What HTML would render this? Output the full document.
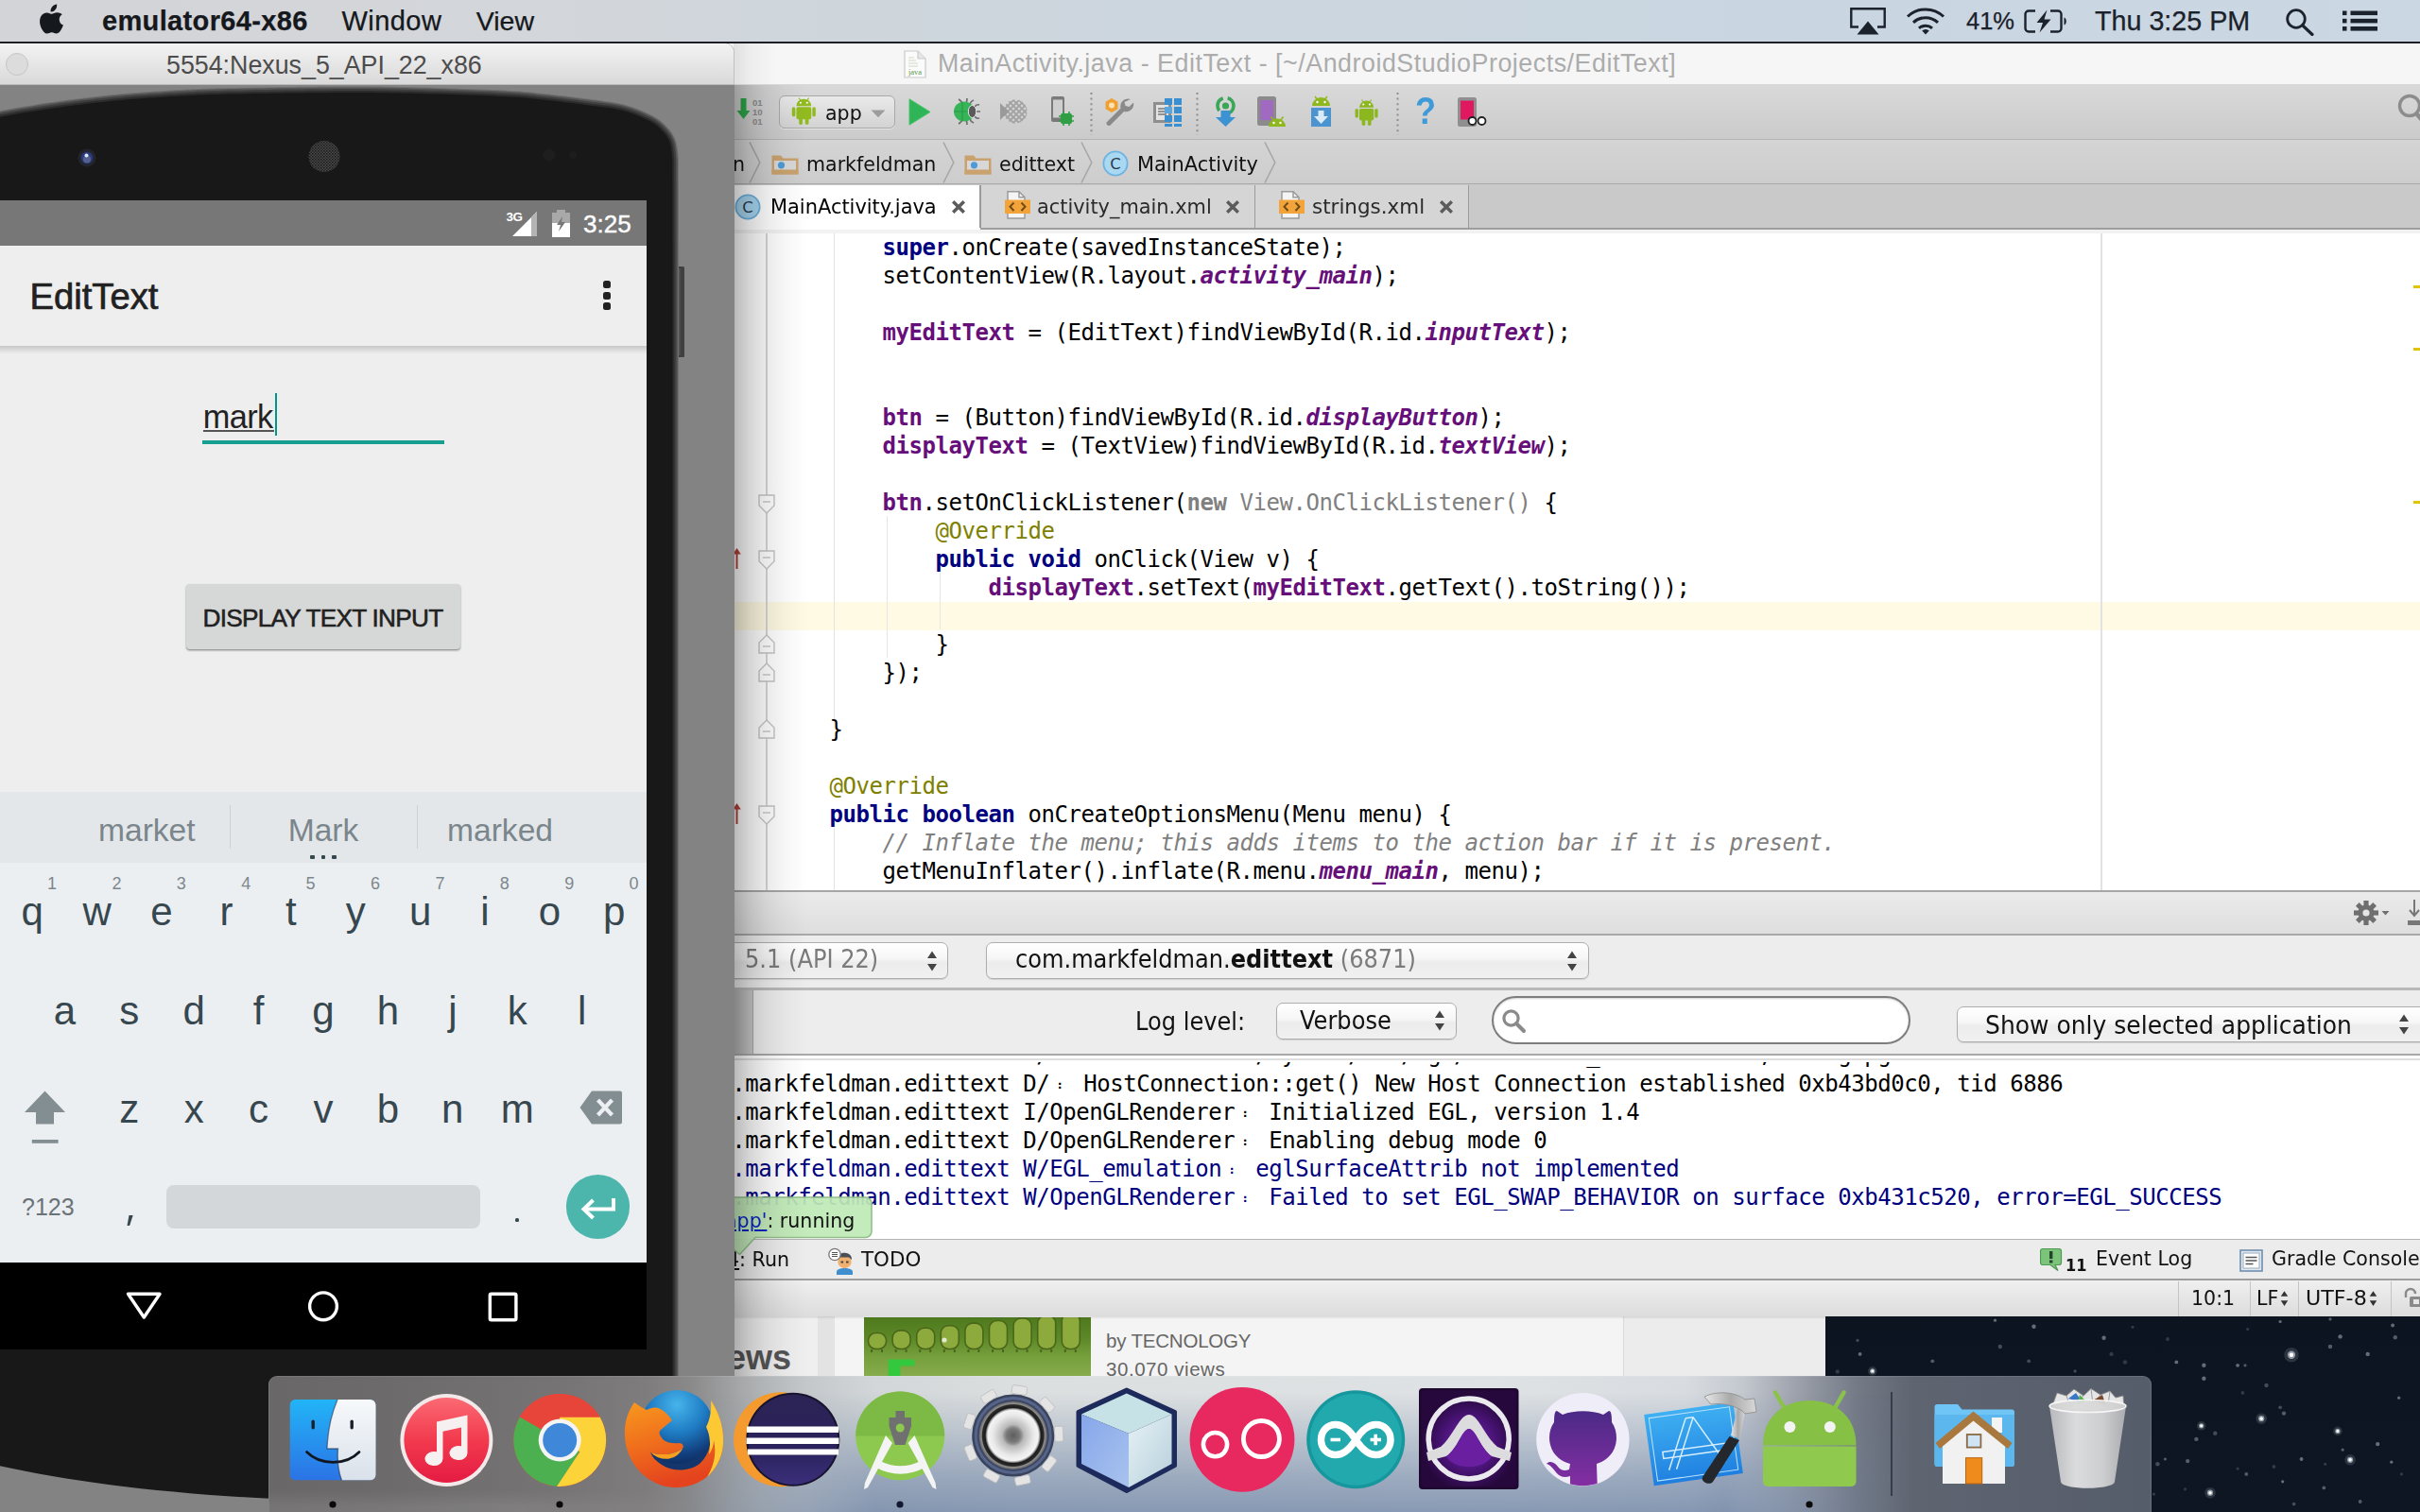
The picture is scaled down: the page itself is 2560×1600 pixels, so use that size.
<!DOCTYPE html>
<html lang="en">
<head>
<meta charset="utf-8">
<title>emulator64-x86</title>
<style>
*{box-sizing:border-box;margin:0;padding:0}
html,body{width:2560px;height:1600px;overflow:hidden;background:#0b141f;}
body{position:relative;font-family:"Liberation Sans",sans-serif;color:#000;-webkit-font-smoothing:antialiased}
.abs{position:absolute}
.t{white-space:nowrap;display:block}
.ui{font-family:"DejaVu Sans","Liberation Sans",sans-serif;font-size:20.6px;color:#111;white-space:nowrap}
.mono{font-family:"DejaVu Sans Mono","Liberation Mono",monospace;white-space:pre}
/* ---------- wallpaper ---------- */
#wall{left:0;top:0;width:2560px;height:1600px;background:linear-gradient(180deg,#0a121c 0%,#0b141f 85%,#0d1622 100%)}
/* ---------- menubar ---------- */
#menubar{left:0;top:0;width:2560px;height:44px;background:linear-gradient(90deg,#d3d4d7 0%,#d3d6da 22%,#cfd6dc 32%,#ccd6de 50%,#c9d6e1 75%,#cbd7e2 100%);z-index:50}
#menuline{left:0;top:44px;width:2560px;height:2px;background:#1c2026;z-index:50}
#menubar span{position:absolute;top:5px;-webkit-text-stroke:0.25px #15181c;font-size:28.5px;line-height:34px;color:#15181c;white-space:nowrap}
/* ---------- IDE ---------- */
#ide{left:776px;top:46px;width:1784px;height:1347px;background:#fff;overflow:hidden}
#idetitle{left:0;top:0;width:1784px;height:43px;background:#f6f6f6}
#idetool{left:0;top:43px;width:1784px;height:59px;background:linear-gradient(180deg,#d9d9d9,#cbcbcb);border-bottom:1px solid #b4b4b4}
#idecrumb{left:0;top:102px;width:1784px;height:47px;background:linear-gradient(180deg,#d4d4d4,#cdcdcd);border-bottom:1px solid #a9a9a9}
#idetabs{left:0;top:149px;width:1784px;height:48px;background:#c9c9c9;border-bottom:2px solid #9d9d9d}
/* ---------- emulator ---------- */
#emu{left:0;top:46px;width:776.6px;height:1554px;background:#838383;overflow:hidden;z-index:20;border-radius:0 9px 0 0}
#emutitle{left:0;top:0;width:776.6px;height:44px;background:linear-gradient(180deg,#f3f3f3,#d9d9d9);border-bottom:1px solid #b9b9b9;border-radius:0 9px 0 0;box-shadow:inset -1px 0 0 #c2c2c2,inset 0 1px 0 #fafafa}

.lg{font-family:"DejaVu Sans","Liberation Sans",sans-serif;transform-origin:0 0}
.code{font-size:24px;line-height:24px;letter-spacing:-0.449px;color:#000}
.k{color:#000080;font-weight:bold}
.f{color:#660e7a;font-weight:bold}
.s{color:#660e7a;font-weight:bold;font-style:italic}
.an{color:#808000}
.c{color:#808080;font-style:italic}
.g{color:#808080}
.gb{color:#808080;font-weight:bold}
</style>
</head>
<body>
<div id="wall" class="abs"></div>

<div class="abs" style="left:700px;top:46px;width:80px;height:44px;background:#f6f6f6"></div>
<!-- ================= IDE WINDOW ================= -->
<div id="ide" class="abs">
  <div id="idetitle" class="abs"></div>
  <div id="idetool" class="abs"></div>
  <div id="idecrumb" class="abs"></div>
  <div id="idetabs" class="abs"></div>
<div class="abs" style="left:-776px;top:-46px;width:2560px;height:1600px">
<span class="abs t" style="left:992.0px;top:54.2px;font-size:26.8px;line-height:26.8px;color:#acacac;letter-spacing:0.535px;">MainActivity.java - EditText - [~/AndroidStudioProjects/EditText]</span>
<svg class="abs" style="left:956.3px;top:53px" width="24" height="30" viewBox="0 0 24 30"><path d="M1 1 H15 L23 9 V29 H1 Z" fill="#fbfbfb" stroke="#c9c9c9" stroke-width="1.2"/><path d="M15 1 V9 H23" fill="#e6e6e6" stroke="#c9c9c9" stroke-width="1.2"/><path d="M5 8h6M5 11h8M5 14h10M5 17h10" stroke="#cfd8c6" stroke-width="1.2"/><text x="12" y="26" font-size="8.5" font-family="Liberation Serif,serif" fill="#5a9a48" text-anchor="middle">java</text></svg>
<svg class="abs" style="left:779px;top:103px" width="32" height="30" viewBox="0 0 32 30"><path d="M4.500 1 H10.500 V14 H14.500 L7.500 23 L0.500 14 H4.500 Z" fill="#2faa4a"/><g font-family="Liberation Sans,sans-serif" font-size="9.500" font-weight="bold" fill="#8c8c8c"><text x="17" y="9">01</text><text x="17" y="19">10</text><text x="17" y="29">01</text></g></svg>
<div class="abs" style="left:824.300px;top:100.600px;width:122.300px;height:35.800px;border:1.500px solid #a9a9a9;border-radius:6px;background:linear-gradient(180deg,#e9e9e9,#d3d3d3);box-shadow:0 1px 0 rgba(255,255,255,.5)"></div>
<svg class="abs" style="left:836.6px;top:103px" width="26.7" height="29.6" viewBox="0 0 27 30"><g fill="#92bb1f"><path d="M5.500 9.300 a8 7.600 0 0 1 16 0 z"/><rect x="5.500" y="10.400" width="16" height="13.200" rx="1.800"/><rect x="0.800" y="10.400" width="3.600" height="10.400" rx="1.800"/><rect x="22.600" y="10.400" width="3.600" height="10.400" rx="1.800"/><rect x="8.300" y="21" width="3.800" height="8.400" rx="1.800"/><rect x="14.900" y="21" width="3.800" height="8.400" rx="1.800"/><path d="M8.200 0.600 L10.200 3.600 M18.800 0.600 L16.800 3.600" stroke="#92bb1f" stroke-width="1.100"/></g><circle cx="10" cy="5.800" r="1.100" fill="#fff"/><circle cx="17" cy="5.800" r="1.100" fill="#fff"/></svg>
<span class="abs t lg" style="left:872.600px;top:109.100px;font-size:22px;line-height:22px;color:#111;transform:scaleX(0.935)">app</span>
<svg class="abs" style="left:920.500px;top:116px" width="16" height="9" viewBox="0 0 16 9"><path d="M0.500 0.500 H15.500 L8 8.200 Z" fill="#9c9c9c"/></svg>
<svg class="abs" style="left:961px;top:104px" width="24" height="29" viewBox="0 0 24 29"><path d="M1 0.800 L23 14.500 L1 28.200 Z" fill="#2fb457" stroke="#46c46a" stroke-width="1"/></svg>
<svg class="abs" style="left:1006px;top:102px" width="32" height="32" viewBox="0 0 32 32"><g fill="none" stroke="#6d6d6d" stroke-width="1.700"><path d="M8 3 q2 1 4 4 M17 2 q0 3 -1 5 M24 4 q-3 1 -4 4 M8 29 q2 -1 4 -4 M17 30 q0 -3 -1 -5 M24 28 q-3 -1 -4 -4 M25 11 q2 -3 5 -2 M26 16 h5 M25 21 q2 3 5 2"/></g><ellipse cx="14" cy="16" rx="11" ry="10.500" fill="#35b558"/><path d="M3 16 H21 M12 6 V26" stroke="#2a9a48" stroke-width="1.200"/><ellipse cx="22.500" cy="16" rx="4.200" ry="6.500" fill="#5a5a5a" stroke="#e8e8e8" stroke-width="1"/></svg>
<svg class="abs" style="left:1057px;top:103px" width="30" height="30" viewBox="0 0 30 30"><defs><clipPath id="hc"><circle cx="17" cy="15" r="12.500"/></clipPath></defs><g clip-path="url(#hc)" stroke="#a2a2a2" stroke-width="1.800"><path d="M-24 0 L6 30 M6 0 L-24 30"/><path d="M-18 0 L12 30 M12 0 L-18 30"/><path d="M-12 0 L18 30 M18 0 L-12 30"/><path d="M-6 0 L24 30 M24 0 L-6 30"/><path d="M0 0 L30 30 M30 0 L0 30"/><path d="M6 0 L36 30 M36 0 L6 30"/><path d="M12 0 L42 30 M42 0 L12 30"/><path d="M18 0 L48 30 M48 0 L18 30"/><path d="M24 0 L54 30 M54 0 L24 30"/></g><path d="M1 6 L10 15 L1 24 Z" fill="#9a9a9a"/></svg>
<svg class="abs" style="left:1110px;top:101px" width="28" height="34" viewBox="0 0 28 34"><rect x="2" y="1" width="14" height="27" rx="2" fill="#7a7a7a"/><rect x="4" y="4.500" width="10" height="19" fill="#cfcfcf"/><rect x="12" y="19" width="12" height="11" rx="2" fill="#2f9e44"/><path d="M10 22 h2 M24 22 h2 M10 27 h2 M24 27 h2 M15 17 v2 M21 17 v2 M15 30 v2 M21 30 v2" stroke="#2f9e44" stroke-width="1.600"/></svg>
<svg class="abs" style="left:1152.8px;top:97px" width="3" height="46" viewBox="0 0 3 46"><path d="M1.500 1 V46" stroke="#8d8d8d" stroke-width="2" stroke-dasharray="2 3.600"/></svg>
<svg class="abs" style="left:1167px;top:102px" width="34" height="32" viewBox="0 0 34 32"><path d="M29 3 a8 8 0 0 0 -10.500 9.500 L4 27 a2.500 2.500 0 0 0 3.500 3.500 L22 16 a8 8 0 0 0 10 -9.500 l-4.500 4.500 l-4 -1 l-1 -4 z" fill="#8a8a8a"/><path d="M9 2 l6.500 3.700 v7.500 L9 17 l-6.500 -3.800 v-7.500 z" fill="#f0a030"/><circle cx="9" cy="9.500" r="3" fill="#fbe3b5"/></svg>
<svg class="abs" style="left:1219px;top:103px" width="32" height="31" viewBox="0 0 32 31"><rect x="1" y="5" width="19" height="22" fill="#8e8e8e"/><rect x="4" y="8" width="13" height="16" fill="#e4e4e4"/><path d="M6 12h9M6 15h9M6 18h9" stroke="#777" stroke-width="1.300"/><g fill="#3a8fd0"><rect x="13" y="1" width="8" height="7"/><rect x="23" y="1" width="8" height="7"/><rect x="13" y="10" width="8" height="7" fill="#5aa7e0"/><rect x="23" y="10" width="8" height="7"/><rect x="13" y="19" width="8" height="7"/><rect x="23" y="19" width="8" height="7"/><rect x="13" y="28" width="8" height="3"/><rect x="23" y="28" width="8" height="3"/></g></svg>
<svg class="abs" style="left:1265px;top:97px" width="3" height="46" viewBox="0 0 3 46"><path d="M1.500 1 V46" stroke="#8d8d8d" stroke-width="2" stroke-dasharray="2 3.600"/></svg>
<svg class="abs" style="left:1283px;top:101px" width="27" height="34" viewBox="0 0 27 34"><circle cx="13.500" cy="11" r="8.500" fill="none" stroke="#3aa657" stroke-width="3.600" stroke-dasharray="16 5"/><circle cx="13.500" cy="11" r="3.600" fill="#3aa657"/><path d="M8.500 16 H18.500 V23 H24 L13.500 33 L3 23 H8.500 Z" fill="#3d92d2"/></svg>
<svg class="abs" style="left:1329px;top:101px" width="35" height="34" viewBox="0 0 35 34"><rect x="1" y="1" width="20" height="31" rx="2.500" fill="#8b8b8b"/><rect x="4" y="5" width="14" height="21" fill="#a06ac0"/><path d="M13 33 a9 8.500 0 0 1 18 0 z" fill="#8fb81f"/><path d="M15.500 22.500 l2.500 3.500 M28.500 22.500 l-2.500 3.500" stroke="#8fb81f" stroke-width="1.500"/><circle cx="18.500" cy="29" r="1.200" fill="#fff"/><circle cx="25.500" cy="29" r="1.200" fill="#fff"/></svg>
<svg class="abs" style="left:1385px;top:101px" width="25" height="34" viewBox="0 0 25 34"><path d="M3 11 a9.500 9 0 0 1 19 0 z" fill="#8fb81f"/><path d="M6 1 l3 4 M19 1 l-3 4" stroke="#8fb81f" stroke-width="1.500"/><circle cx="8.500" cy="7" r="1.200" fill="#fff"/><circle cx="16.500" cy="7" r="1.200" fill="#fff"/><rect x="2" y="13" width="21" height="20" fill="#4b94cf"/><path d="M9.500 16 H15.500 V22 H20 L12.500 30 L5 22 H9.500 Z" fill="#dbeaf7"/></svg>
<svg class="abs" style="left:1432.3px;top:104.5px" width="27.2" height="28.5" viewBox="0 0 27 30"><g fill="#8cb71f"><path d="M5.500 9.300 a8 7.600 0 0 1 16 0 z"/><rect x="5.500" y="10.400" width="16" height="13.200" rx="1.800"/><rect x="0.800" y="10.400" width="3.600" height="10.400" rx="1.800"/><rect x="22.600" y="10.400" width="3.600" height="10.400" rx="1.800"/><rect x="8.300" y="21" width="3.800" height="8.400" rx="1.800"/><rect x="14.900" y="21" width="3.800" height="8.400" rx="1.800"/><path d="M8.200 0.600 L10.200 3.600 M18.800 0.600 L16.800 3.600" stroke="#8cb71f" stroke-width="1.100"/></g><circle cx="10" cy="5.800" r="1.100" fill="#fff"/><circle cx="17" cy="5.800" r="1.100" fill="#fff"/></svg>
<svg class="abs" style="left:1477px;top:97px" width="3" height="46" viewBox="0 0 3 46"><path d="M1.500 1 V46" stroke="#8d8d8d" stroke-width="2" stroke-dasharray="2 3.600"/></svg>
<span class="abs t" style="left:1497px;top:97px;font-size:40px;line-height:40px;color:#3f9ad8;font-family:'Liberation Sans',sans-serif;font-weight:bold;transform:scaleX(0.900);transform-origin:0 0">?</span>
<svg class="abs" style="left:1541px;top:102px" width="33" height="33" viewBox="0 0 33 33"><rect x="1" y="1" width="20" height="31" rx="2.500" fill="#8f8f8f"/><rect x="4" y="4.500" width="14" height="20" fill="#e0185f"/><circle cx="16.500" cy="26" r="4" fill="#fff" stroke="#222" stroke-width="1.800"/><circle cx="26.500" cy="26" r="4" fill="#fff" stroke="#222" stroke-width="1.800"/></svg>
<svg class="abs" style="left:2536px;top:99px" width="30" height="32" viewBox="0 0 30 32"><circle cx="13" cy="13" r="10.500" fill="none" stroke="#8c8c8c" stroke-width="3.400"/><path d="M20 21 L28 30" stroke="#8c8c8c" stroke-width="4.500"/></svg>
<span class="abs t lg" style="left:775.0px;top:163.0px;font-size:22px;line-height:22px;color:#111;transform:scaleX(0.935);">n</span>
<svg class="abs" style="left:791px;top:150px" width="16" height="44" viewBox="0 0 16 44"><path d="M2 0.5 L12.8 22 L2 43.5" fill="none" stroke="#a7a7a7" stroke-width="1.6"/></svg>
<svg class="abs" style="left:996px;top:150px" width="16" height="44" viewBox="0 0 16 44"><path d="M2 0.5 L12.8 22 L2 43.5" fill="none" stroke="#a7a7a7" stroke-width="1.6"/></svg>
<svg class="abs" style="left:1141.7px;top:150px" width="16" height="44" viewBox="0 0 16 44"><path d="M2 0.5 L12.8 22 L2 43.5" fill="none" stroke="#a7a7a7" stroke-width="1.6"/></svg>
<svg class="abs" style="left:1336px;top:150px" width="16" height="44" viewBox="0 0 16 44"><path d="M2 0.5 L12.8 22 L2 43.5" fill="none" stroke="#a7a7a7" stroke-width="1.6"/></svg>
<svg class="abs" style="left:815.7px;top:162px" width="29" height="23" viewBox="0 0 29 23"><path d="M0.5 2.5 H10 L12.5 5.5 H28.5 V22.5 H0.5 Z" fill="#c9a26f"/><rect x="3" y="8" width="23" height="12" fill="#d8d8d8"/><rect x="0.5" y="17.5" width="28" height="5" fill="#c9a26f"/><circle cx="10.5" cy="12.8" r="3.6" fill="#4e9bd9"/></svg>
<svg class="abs" style="left:1020px;top:162px" width="29" height="23" viewBox="0 0 29 23"><path d="M0.5 2.5 H10 L12.5 5.5 H28.5 V22.5 H0.5 Z" fill="#c9a26f"/><rect x="3" y="8" width="23" height="12" fill="#d8d8d8"/><rect x="0.5" y="17.5" width="28" height="5" fill="#c9a26f"/><circle cx="10.5" cy="12.8" r="3.6" fill="#4e9bd9"/></svg>
<span class="abs t lg" style="left:852.5px;top:163.0px;font-size:22px;line-height:22px;color:#111;transform:scaleX(0.935);">markfeldman</span>
<span class="abs t lg" style="left:1057.0px;top:163.0px;font-size:22px;line-height:22px;color:#111;transform:scaleX(0.935);">edittext</span>
<svg class="abs" style="left:1166px;top:159.3px" width="28" height="28" viewBox="0 0 28 28"><circle cx="14" cy="14" r="12.6" fill="#a9d8f3" stroke="#6db3e0" stroke-width="1.8"/><text x="14" y="20.3" font-size="16.5" font-family="DejaVu Sans,sans-serif" fill="#2b3d4d" text-anchor="middle">C</text></svg>
<span class="abs t lg" style="left:1203.0px;top:163.0px;font-size:22px;line-height:22px;color:#111;transform:scaleX(0.948);">MainActivity</span>
<div class="abs" style="left:776.0px;top:195.5px;width:260.6px;height:47.5px;background:#ffffff;"></div>
<div class="abs" style="left:1036.6px;top:196.0px;width:290.4px;height:45.0px;background:#d5d5d5;"></div>
<div class="abs" style="left:1327.0px;top:196.0px;width:226.0px;height:45.0px;background:#d5d5d5;"></div>
<div class="abs" style="left:1036.0px;top:196.0px;width:1.6px;height:45.0px;background:#9b9b9b;"></div>
<div class="abs" style="left:1326.5px;top:196.0px;width:1.6px;height:45.0px;background:#9b9b9b;"></div>
<div class="abs" style="left:1552.5px;top:196.0px;width:1.6px;height:45.0px;background:#9b9b9b;"></div>
<svg class="abs" style="left:776.5px;top:204.8px" width="28" height="28" viewBox="0 0 28 28"><circle cx="14" cy="14" r="12.6" fill="#a9d8f3" stroke="#6db3e0" stroke-width="1.8"/><text x="14" y="20.3" font-size="16.5" font-family="DejaVu Sans,sans-serif" fill="#2b3d4d" text-anchor="middle">C</text></svg>
<span class="abs t lg" style="left:815.0px;top:208.0px;font-size:22px;line-height:22px;color:#000;transform:scaleX(0.951);">MainActivity.java</span>
<span class="abs t lg" style="left:1096.5px;top:208.0px;font-size:22px;line-height:22px;color:#2a2a2a;transform:scaleX(0.949);">activity_main.xml</span>
<span class="abs t lg" style="left:1387.5px;top:208.0px;font-size:22px;line-height:22px;color:#2a2a2a;transform:scaleX(0.975);">strings.xml</span>
<svg class="abs" style="left:1005.7px;top:210.8px" width="16" height="16" viewBox="0 0 16 16"><path d="M2.2 2.2 L13.8 13.8 M13.8 2.2 L2.2 13.8" stroke="#5c5c5c" stroke-width="3.4"/></svg>
<svg class="abs" style="left:1295.7px;top:210.8px" width="16" height="16" viewBox="0 0 16 16"><path d="M2.2 2.2 L13.8 13.8 M13.8 2.2 L2.2 13.8" stroke="#5c5c5c" stroke-width="3.4"/></svg>
<svg class="abs" style="left:1521.6px;top:210.8px" width="16" height="16" viewBox="0 0 16 16"><path d="M2.2 2.2 L13.8 13.8 M13.8 2.2 L2.2 13.8" stroke="#5c5c5c" stroke-width="3.4"/></svg>
<svg class="abs" style="left:1062.5px;top:202px" width="27" height="30" viewBox="0 0 27 30"><path d="M3 0.8 H15 L21 6.8 V29 H3 Z" fill="#f4f4f4" stroke="#9a9a9a" stroke-width="1.5"/><path d="M15 0.8 V6.8 H21" fill="none" stroke="#9a9a9a" stroke-width="1.5"/><rect x="0" y="9.5" width="27" height="14.5" fill="#f2a33a"/><path d="M9.5 12.5 L5.5 16.7 L9.5 21 M17.5 12.5 L21.5 16.7 L17.5 21" fill="none" stroke="#6b4a17" stroke-width="1.9"/></svg>
<svg class="abs" style="left:1352.7px;top:202px" width="27" height="30" viewBox="0 0 27 30"><path d="M3 0.8 H15 L21 6.8 V29 H3 Z" fill="#f4f4f4" stroke="#9a9a9a" stroke-width="1.5"/><path d="M15 0.8 V6.8 H21" fill="none" stroke="#9a9a9a" stroke-width="1.5"/><rect x="0" y="9.5" width="27" height="14.5" fill="#f2a33a"/><path d="M9.5 12.5 L5.5 16.7 L9.5 21 M17.5 12.5 L21.5 16.7 L17.5 21" fill="none" stroke="#6b4a17" stroke-width="1.9"/></svg>
<div class="abs" style="left:776.0px;top:243.0px;width:1784.0px;height:4.0px;background:#f2f2f2;"></div>
<div class="abs" style="left:776.0px;top:247.0px;width:1784.0px;height:695.0px;background:#ffffff;"></div>
<div class="abs" style="left:776.0px;top:636.5px;width:1784.0px;height:30.0px;background:#fffae3;"></div>
<div class="abs" style="left:810.0px;top:247.0px;width:1.5px;height:695.0px;background:#d4d4d4;"></div>
<div class="abs" style="left:2222.0px;top:247.0px;width:1.6px;height:695.0px;background:#e2e2e2;"></div>
<div class="abs" style="left:882.0px;top:247.0px;width:1.3px;height:518.0px;background:#e3e3e3;"></div>
<div class="abs" style="left:882.0px;top:876.0px;width:1.3px;height:66.0px;background:#e3e3e3;"></div>
<div class="abs" style="left:938.0px;top:546.0px;width:1.3px;height:150.0px;background:#e6e6e6;"></div>
<div class="abs" style="left:994.0px;top:606.0px;width:1.3px;height:60.0px;background:#e6e6e6;"></div>
<div class="abs" style="left:2553.0px;top:301.5px;width:7.0px;height:3.5px;background:#e2c400;"></div>
<div class="abs" style="left:2553.0px;top:367.5px;width:7.0px;height:3.5px;background:#e2c400;"></div>
<div class="abs" style="left:2553.0px;top:529.5px;width:7.0px;height:3.5px;background:#e2c400;"></div>
<svg class="abs" style="left:801.5px;top:522.5px" width="18" height="21" viewBox="0 0 18 21"><path d="M1 1 H17 V12 L9 20 L1 12 Z" fill="#fff" stroke="#c4c4c4" stroke-width="1.4"/><path d="M5 8 H13" stroke="#c4c4c4" stroke-width="1.4"/></svg>
<svg class="abs" style="left:801.5px;top:581.5px" width="18" height="21" viewBox="0 0 18 21"><path d="M1 1 H17 V12 L9 20 L1 12 Z" fill="#fff" stroke="#c4c4c4" stroke-width="1.4"/><path d="M5 8 H13" stroke="#c4c4c4" stroke-width="1.4"/></svg>
<svg class="abs" style="left:801.5px;top:670.5px" width="18" height="21" viewBox="0 0 18 21"><path d="M1 20 H17 V9 L9 1 L1 9 Z" fill="#fff" stroke="#c4c4c4" stroke-width="1.4"/><path d="M5 13 H13" stroke="#c4c4c4" stroke-width="1.4"/></svg>
<svg class="abs" style="left:801.5px;top:700.5px" width="18" height="21" viewBox="0 0 18 21"><path d="M1 20 H17 V9 L9 1 L1 9 Z" fill="#fff" stroke="#c4c4c4" stroke-width="1.4"/><path d="M5 13 H13" stroke="#c4c4c4" stroke-width="1.4"/></svg>
<svg class="abs" style="left:801.5px;top:760.5px" width="18" height="21" viewBox="0 0 18 21"><path d="M1 20 H17 V9 L9 1 L1 9 Z" fill="#fff" stroke="#c4c4c4" stroke-width="1.4"/><path d="M5 13 H13" stroke="#c4c4c4" stroke-width="1.4"/></svg>
<svg class="abs" style="left:801.5px;top:851.5px" width="18" height="21" viewBox="0 0 18 21"><path d="M1 1 H17 V12 L9 20 L1 12 Z" fill="#fff" stroke="#c4c4c4" stroke-width="1.4"/><path d="M5 8 H13" stroke="#c4c4c4" stroke-width="1.4"/></svg>
<svg class="abs" style="left:774px;top:579px" width="12" height="24" viewBox="0 0 12 24"><path d="M5.5 23 V5" stroke="#b8403a" stroke-width="2"/><path d="M1.2 7.5 L5.5 1 L9.8 7.5 Z" fill="#b8403a"/></svg>
<svg class="abs" style="left:774px;top:849px" width="12" height="24" viewBox="0 0 12 24"><path d="M5.5 23 V5" stroke="#b8403a" stroke-width="2"/><path d="M1.2 7.5 L5.5 1 L9.8 7.5 Z" fill="#b8403a"/></svg>
<span class="abs t mono code" style="left:933.5px;top:250.0px"><span class="k">super</span>.onCreate(savedInstanceState);</span>
<span class="abs t mono code" style="left:933.5px;top:280.0px">setContentView(R.layout.<span class="s">activity_main</span>);</span>
<span class="abs t mono code" style="left:933.5px;top:340.0px"><span class="f">myEditText</span> = (EditText)findViewById(R.id.<span class="s">inputText</span>);</span>
<span class="abs t mono code" style="left:933.5px;top:430.0px"><span class="f">btn</span> = (Button)findViewById(R.id.<span class="s">displayButton</span>);</span>
<span class="abs t mono code" style="left:933.5px;top:460.0px"><span class="f">displayText</span> = (TextView)findViewById(R.id.<span class="s">textView</span>);</span>
<span class="abs t mono code" style="left:933.5px;top:520.0px"><span class="f">btn</span>.setOnClickListener(<span class="gb">new</span><span class="g"> View.OnClickListener()</span> {</span>
<span class="abs t mono code" style="left:989.5px;top:550.0px"><span class="an">@Override</span></span>
<span class="abs t mono code" style="left:989.5px;top:580.0px"><span class="k">public void</span> onClick(View v) {</span>
<span class="abs t mono code" style="left:1045.5px;top:610.0px"><span class="f">displayText</span>.setText(<span class="f">myEditText</span>.getText().toString());</span>
<span class="abs t mono code" style="left:989.5px;top:670.0px">}</span>
<span class="abs t mono code" style="left:933.5px;top:700.0px">});</span>
<span class="abs t mono code" style="left:877.5px;top:760.0px">}</span>
<span class="abs t mono code" style="left:877.5px;top:820.0px"><span class="an">@Override</span></span>
<span class="abs t mono code" style="left:877.5px;top:850.0px"><span class="k">public boolean</span> onCreateOptionsMenu(Menu menu) {</span>
<span class="abs t mono code" style="left:933.5px;top:880.0px"><span class="c">// Inflate the menu; this adds items to the action bar if it is present.</span></span>
<span class="abs t mono code" style="left:933.5px;top:910.0px">getMenuInflater().inflate(R.menu.<span class="s">menu_main</span>, menu);</span>
<div class="abs" style="left:776.0px;top:942.0px;width:1784.0px;height:1.5px;background:#a6a6a6;"></div>
<div class="abs" style="left:776.0px;top:943.5px;width:1784.0px;height:44.5px;background:linear-gradient(180deg,#ebebeb,#dedede);"></div>
<div class="abs" style="left:776.0px;top:987.5px;width:1784.0px;height:2.0px;background:#a9a9a9;"></div>
<div class="abs" style="left:776.0px;top:989.5px;width:1784.0px;height:56.0px;background:#ededed;"></div>
<div class="abs" style="left:776.0px;top:1045.0px;width:1784.0px;height:2.5px;background:#b9b9b9;"></div>
<div class="abs" style="left:776.0px;top:1047.5px;width:1784.0px;height:67.0px;background:#ededed;"></div>
<div class="abs" style="left:776.0px;top:1047.5px;width:21.0px;height:67.0px;background:linear-gradient(90deg,#b5b5b5,#c9c9c9);border-right:1.5px solid #a8a8a8;"></div>
<div class="abs" style="left:776.0px;top:1114.5px;width:1784.0px;height:2.0px;background:#a9a9a9;"></div>
<div class="abs" style="left:776.0px;top:1116.5px;width:1784.0px;height:194.5px;background:#ffffff;"></div>
<div class="abs" style="left:776.0px;top:1120.0px;width:1784.0px;height:1.5px;background:#dedede;"></div>
<svg class="abs" style="left:2489px;top:952px" width="42" height="28" viewBox="0 0 42 28"><g transform="translate(14,14)" fill="#6f6f6f"><rect x="-2.6" y="-13" width="5.2" height="8" transform="rotate(0)"/><rect x="-2.6" y="-13" width="5.2" height="8" transform="rotate(45)"/><rect x="-2.6" y="-13" width="5.2" height="8" transform="rotate(90)"/><rect x="-2.6" y="-13" width="5.2" height="8" transform="rotate(135)"/><rect x="-2.6" y="-13" width="5.2" height="8" transform="rotate(180)"/><rect x="-2.6" y="-13" width="5.2" height="8" transform="rotate(225)"/><rect x="-2.6" y="-13" width="5.2" height="8" transform="rotate(270)"/><rect x="-2.6" y="-13" width="5.2" height="8" transform="rotate(315)"/><circle r="8.6"/><circle r="3.6" fill="#e4e4e4"/></g><path d="M30.5 12 H38.5 L34.5 16.5 Z" fill="#6f6f6f"/></svg><svg class="abs" style="left:2546px;top:950px" width="16" height="32" viewBox="0 0 16 32"><path d="M8 2 V18 M3 13 L8 19 L13 13" fill="none" stroke="#777" stroke-width="2"/><rect x="1" y="24" width="15" height="5" fill="#777"/></svg>
<div class="abs" style="left:700.0px;top:996.7px;width:302.7px;height:39.5px;border:1.5px solid #aeaeae;border-radius:7px;background:linear-gradient(180deg,#ffffff 0%,#f6f6f6 45%,#ececec 55%,#f1f1f1 100%);box-shadow:0 1px 1px rgba(0,0,0,.12);"></div>
<span class="abs t lg" style="left:788.0px;top:1002.2px;font-size:26px;line-height:26px;color:#7b7b7b;transform:scaleX(0.927);">5.1 (API 22)</span>
<svg class="abs" style="left:980.0px;top:1004.5px" width="12" height="24" viewBox="0 0 12 24"><path d="M6 1.5 L11 9 H1 Z M6 22.5 L11 15 H1 Z" fill="#444"/></svg>
<div class="abs" style="left:1043.0px;top:996.7px;width:637.5px;height:39.5px;border:1.5px solid #aeaeae;border-radius:7px;background:linear-gradient(180deg,#ffffff 0%,#f6f6f6 45%,#ececec 55%,#f1f1f1 100%);box-shadow:0 1px 1px rgba(0,0,0,.12);"></div>
<span class="abs t lg" style="left:1074.4px;top:1002.2px;font-size:26px;line-height:26px;color:#111;transform:scaleX(0.927);">com.markfeldman.<b>edittext</b> <span style="color:#7b7b7b">(6871)</span></span>
<svg class="abs" style="left:1656.5px;top:1004.5px" width="12" height="24" viewBox="0 0 12 24"><path d="M6 1.5 L11 9 H1 Z M6 22.5 L11 15 H1 Z" fill="#444"/></svg>
<span class="abs t lg" style="left:1200.5px;top:1067.5px;font-size:26px;line-height:26px;color:#111;transform:scaleX(0.927);">Log level:</span>
<div class="abs" style="left:1349.5px;top:1061.0px;width:191.3px;height:38.5px;border:1.5px solid #aeaeae;border-radius:7px;background:linear-gradient(180deg,#ffffff 0%,#f6f6f6 45%,#ececec 55%,#f1f1f1 100%);box-shadow:0 1px 1px rgba(0,0,0,.12);"></div>
<span class="abs t lg" style="left:1375.0px;top:1067.3px;font-size:26px;line-height:26px;color:#111;transform:scaleX(0.927);">Verbose</span>
<svg class="abs" style="left:1516.5px;top:1068.0px" width="12" height="24" viewBox="0 0 12 24"><path d="M6 1.5 L11 9 H1 Z M6 22.5 L11 15 H1 Z" fill="#444"/></svg>
<div class="abs" style="left:1578px;top:1054px;width:443px;height:50.5px;border:2px solid #7d7d7d;border-radius:26px;background:#fff;box-shadow:inset 0 1px 2px rgba(0,0,0,.18)"></div>
<svg class="abs" style="left:1587px;top:1066px" width="28" height="28" viewBox="0 0 28 28"><circle cx="11.5" cy="11.5" r="7.6" fill="none" stroke="#8a8a8a" stroke-width="3.2"/><path d="M17 17 L25 25" stroke="#8a8a8a" stroke-width="4" stroke-linecap="round"/></svg>
<div class="abs" style="left:2069.5px;top:1064.5px;width:520.0px;height:38.5px;border:1.5px solid #aeaeae;border-radius:7px;background:linear-gradient(180deg,#ffffff 0%,#f6f6f6 45%,#ececec 55%,#f1f1f1 100%);box-shadow:0 1px 1px rgba(0,0,0,.12);"></div>
<span class="abs t lg" style="left:2100.0px;top:1072.3px;font-size:26px;line-height:26px;color:#111;transform:scaleX(0.962);">Show only selected application</span>
<svg class="abs" style="left:2537.0px;top:1071.5px" width="12" height="24" viewBox="0 0 12 24"><path d="M6 1.5 L11 9 H1 Z M6 22.5 L11 15 H1 Z" fill="#444"/></svg>
<div class="abs" style="left:776px;top:1124px;width:1784px;height:8px;overflow:hidden"><span class="abs t mono code" style="left:-1.8px;top:-20.5px;color:#000;">.markfeldman.edittext D/libEGL</span><span class="abs t mono code" style="left:454.2px;top:-20.5px;color:#000;">loaded /system/lib/egl/libGLESv2_emulation.so, using pg</span></div>
<span class="abs t mono code" style="left:774.2px;top:1135.1px;color:#000;">.markfeldman.edittext D/</span>
<span class="abs t mono" style="left:1117.2px;top:1141.4px;font-size:13px;line-height:13px;font-weight:bold;color:#000">:</span>
<span class="abs t mono code" style="left:1146.2px;top:1135.1px;color:#000;">HostConnection::get() New Host Connection established 0xb43bd0c0, tid 6886</span>
<span class="abs t mono code" style="left:774.2px;top:1165.1px;color:#000;">.markfeldman.edittext I/OpenGLRenderer</span>
<span class="abs t mono" style="left:1313.2px;top:1171.4px;font-size:13px;line-height:13px;font-weight:bold;color:#000">:</span>
<span class="abs t mono code" style="left:1342.2px;top:1165.1px;color:#000;">Initialized EGL, version 1.4</span>
<span class="abs t mono code" style="left:774.2px;top:1195.1px;color:#000;">.markfeldman.edittext D/OpenGLRenderer</span>
<span class="abs t mono" style="left:1313.2px;top:1201.4px;font-size:13px;line-height:13px;font-weight:bold;color:#000">:</span>
<span class="abs t mono code" style="left:1342.2px;top:1195.1px;color:#000;">Enabling debug mode 0</span>
<span class="abs t mono code" style="left:774.2px;top:1225.1px;color:#00007f;">.markfeldman.edittext W/EGL_emulation</span>
<span class="abs t mono" style="left:1299.2px;top:1231.4px;font-size:13px;line-height:13px;font-weight:bold;color:#00007f">:</span>
<span class="abs t mono code" style="left:1328.2px;top:1225.1px;color:#00007f;">eglSurfaceAttrib not implemented</span>
<span class="abs t mono code" style="left:774.2px;top:1255.1px;color:#00007f;">.markfeldman.edittext W/OpenGLRenderer</span>
<span class="abs t mono" style="left:1313.2px;top:1261.4px;font-size:13px;line-height:13px;font-weight:bold;color:#00007f">:</span>
<span class="abs t mono code" style="left:1342.2px;top:1255.1px;color:#00007f;">Failed to set EGL_SWAP_BEHAVIOR on surface 0xb431c520, error=EGL_SUCCESS</span>
<div class="abs" style="left:776.0px;top:1310.5px;width:1784.0px;height:1.5px;background:#b4b4b4;"></div>
<div class="abs" style="left:776.0px;top:1312.0px;width:1784.0px;height:41.0px;background:#ececec;"></div>
<div class="abs" style="left:776.0px;top:1353.0px;width:1784.0px;height:2.2px;background:#9e9e9e;"></div>
<div class="abs" style="left:776.0px;top:1355.2px;width:1784.0px;height:38.3px;background:linear-gradient(180deg,#efefef,#dcdcdc);"></div>
<span class="abs t lg" style="left:769.3px;top:1322.3px;font-size:22px;line-height:22px;color:#111;transform:scaleX(0.935);"><span style="text-decoration:underline">4</span>: Run</span>
<span class="abs t lg" style="left:911.0px;top:1322.3px;font-size:22px;line-height:22px;color:#111;transform:scaleX(0.975);">TODO</span>
<svg class="abs" style="left:875px;top:1320px" width="30" height="30" viewBox="0 0 30 30"><path d="M10 29 h17 v-3 c0 -3 -4 -4 -8.5 -4 s-8.500 1 -8.500 4 z" fill="#3f8fd0"/><circle cx="18.5" cy="15" r="7.2" fill="#f0b070"/><path d="M11 13 c0 -6 5 -8 9 -7 c4 0.500 6 3 6 7 l-3 -2.500 h-9 z" fill="#4a4f57"/><rect x="14.5" y="14.500" width="2.600" height="2" fill="#444"/><rect x="20" y="14.500" width="2.600" height="2" fill="#444"/><circle cx="8" cy="7.500" r="6.200" fill="#fff" stroke="#777" stroke-width="1.300"/><path d="M5 5.500h6M5 7.500h6M5 9.500h6" stroke="#555" stroke-width="1"/></svg>
<svg class="abs" style="left:2158px;top:1320px" width="30" height="30" viewBox="0 0 30 30"><path d="M3 1.500 h17 a2.500 2.500 0 0 1 2.500 2.500 v12 a2.500 2.500 0 0 1 -2.500 2.500 h-4 l3 6 l-8 -6 h-8 a2.500 2.500 0 0 1 -2.500 -2.500 v-12 a2.500 2.500 0 0 1 2.500 -2.500 z" fill="#7cc47a" stroke="#4e9a52" stroke-width="1.200"/><rect x="10" y="4" width="3.400" height="8" fill="#24472a"/><rect x="10" y="13.500" width="3.400" height="3" fill="#24472a"/></svg>
<span class="abs t lg" style="left:2185.0px;top:1330.5px;font-size:17px;line-height:17px;color:#111;transform:scaleX(0.95);font-weight:bold;">11</span>
<span class="abs t lg" style="left:2216.5px;top:1320.9px;font-size:22px;line-height:22px;color:#111;transform:scaleX(0.935);">Event Log</span>
<svg class="abs" style="left:2369px;top:1322px" width="25" height="24" viewBox="0 0 25 24"><rect x="1" y="1" width="23" height="22" fill="#dfe7ef" stroke="#6f8fb0" stroke-width="1.6"/><rect x="4" y="4" width="17" height="16" fill="#fff" stroke="#9ab" stroke-width="1"/><path d="M6.5 8.5h12M6.5 12h12M6.5 15.5h8" stroke="#555" stroke-width="1.4"/></svg>
<span class="abs t lg" style="left:2402.8px;top:1320.9px;font-size:22px;line-height:22px;color:#111;transform:scaleX(0.935);">Gradle Console</span>
<svg class="abs" style="left:770px;top:1262px" width="160" height="70" viewBox="770 1262 160 70"><path d="M760 1267 H915.5 a6.5 6.5 0 0 1 6.5 6.5 V1303 a6.5 6.5 0 0 1 -6.5 6.5 H799 L782.5 1327.5 L776 1322 V1309.5 H760 Z" fill="#bfe9b6" fill-opacity="0.93" stroke="#93bf8c" stroke-width="1.6"/></svg>
<span class="abs t lg" style="left:766.7px;top:1280.5px;font-size:22px;line-height:22px;color:#111;transform:scaleX(0.935);"><span style="color:#0b24c9;text-decoration:underline">app'</span>: running</span>
<div class="abs" style="left:2303.5px;top:1356.0px;width:1.4px;height:37.0px;background:#c4c4c4;"></div>
<div class="abs" style="left:2379.5px;top:1356.0px;width:1.4px;height:37.0px;background:#c4c4c4;"></div>
<div class="abs" style="left:2430.5px;top:1356.0px;width:1.4px;height:37.0px;background:#c4c4c4;"></div>
<div class="abs" style="left:2528.5px;top:1356.0px;width:1.4px;height:37.0px;background:#c4c4c4;"></div>
<span class="abs t lg" style="left:2318.0px;top:1363.3px;font-size:22px;line-height:22px;color:#111;transform:scaleX(0.935);">10:1</span>
<span class="abs t lg" style="left:2387.0px;top:1363.3px;font-size:22px;line-height:22px;color:#111;transform:scaleX(0.935);">LF</span>
<svg class="abs" style="left:2411.5px;top:1364.5px" width="9" height="18" viewBox="0 0 12 24"><path d="M6 1.5 L11 9 H1 Z M6 22.5 L11 15 H1 Z" fill="#333"/></svg>
<span class="abs t lg" style="left:2438.7px;top:1363.3px;font-size:22px;line-height:22px;color:#111;transform:scaleX(1.01);">UTF-8</span>
<svg class="abs" style="left:2506.0px;top:1364.5px" width="9" height="18" viewBox="0 0 12 24"><path d="M6 1.5 L11 9 H1 Z M6 22.5 L11 15 H1 Z" fill="#333"/></svg>
<svg class="abs" style="left:2541px;top:1361px" width="22" height="24" viewBox="0 0 22 24"><path d="M4 12 V8 a5 5 0 0 1 10 0" fill="none" stroke="#8a8a8a" stroke-width="2.4"/><rect x="8" y="11" width="14" height="11" rx="1.5" fill="#8a8a8a"/><rect x="12" y="14" width="6" height="5" fill="#e6e6e6"/></svg>
<div class="abs" style="left:776.0px;top:46.0px;width:50.0px;height:44.0px;background:linear-gradient(90deg,rgba(0,0,0,.09) 0,rgba(0,0,0,.04) 16px,rgba(0,0,0,0) 44px);"></div>
<div class="abs" style="left:776.0px;top:90.0px;width:80.0px;height:1303.0px;background:linear-gradient(90deg,rgba(0,0,0,.28) 0,rgba(0,0,0,.17) 16px,rgba(0,0,0,.085) 34px,rgba(0,0,0,.035) 54px,rgba(0,0,0,0) 78px);"></div>
</div>
</div>

<!-- ================= BROWSER STRIP ================= -->
<div class="abs" style="left:776px;top:1393px;width:1154.500px;height:120px;background:#f4f4f4;overflow:hidden;z-index:10">
<div class="abs" style="left:0.0px;top:0.0px;width:88.5px;height:120.0px;background:#efefef;"></div>
<div class="abs" style="left:88.5px;top:0.0px;width:18.5px;height:120.0px;background:#e3e3e3;"></div>
<div class="abs" style="left:940.5px;top:0.0px;width:214.0px;height:120.0px;background:#ececec;border-left:1.500px solid #dadada;"></div>
<div class="abs" style="left:138.0px;top:1.0px;width:240.0px;height:120.0px;background:linear-gradient(180deg,#4e7a1e 0px,#5d8827 22px,#76a03c 42px,#86ab4c 62px);"></div>
<svg class="abs" style="left:138px;top:1px" width="240" height="62" viewBox="0 0 240 62"><rect x="4.5" y="16.5" width="19" height="17.0" rx="8" fill="#8daa3d" stroke="#4a661b" stroke-width="1.6"/><path d="M8.0 34.0 v3 M19.0 34.0 v3" stroke="#4a661b" stroke-width="2"/><rect x="30.1" y="13.9" width="19" height="19.6" rx="8" fill="#8daa3d" stroke="#4a661b" stroke-width="1.6"/><path d="M33.6 34.0 v3 M44.6 34.0 v3" stroke="#4a661b" stroke-width="2"/><rect x="55.7" y="11.3" width="19" height="22.2" rx="8" fill="#8daa3d" stroke="#4a661b" stroke-width="1.6"/><path d="M59.2 34.0 v3 M70.2 34.0 v3" stroke="#4a661b" stroke-width="2"/><rect x="81.3" y="8.7" width="19" height="24.8" rx="8" fill="#8daa3d" stroke="#4a661b" stroke-width="1.6"/><path d="M84.8 34.0 v3 M95.8 34.0 v3" stroke="#4a661b" stroke-width="2"/><rect x="106.9" y="6.1" width="19" height="27.4" rx="8" fill="#8daa3d" stroke="#4a661b" stroke-width="1.6"/><path d="M110.4 34.0 v3 M121.4 34.0 v3" stroke="#4a661b" stroke-width="2"/><rect x="132.5" y="3.5" width="19" height="30.0" rx="8" fill="#8daa3d" stroke="#4a661b" stroke-width="1.6"/><path d="M136.0 34.0 v3 M147.0 34.0 v3" stroke="#4a661b" stroke-width="2"/><rect x="158.1" y="0.9" width="19" height="32.6" rx="8" fill="#8daa3d" stroke="#4a661b" stroke-width="1.6"/><path d="M161.6 34.0 v3 M172.6 34.0 v3" stroke="#4a661b" stroke-width="2"/><rect x="183.7" y="-1.7" width="19" height="35.2" rx="8" fill="#8daa3d" stroke="#4a661b" stroke-width="1.6"/><path d="M187.2 34.0 v3 M198.2 34.0 v3" stroke="#4a661b" stroke-width="2"/><rect x="209.3" y="-4.3" width="19" height="37.8" rx="8" fill="#8daa3d" stroke="#4a661b" stroke-width="1.6"/><path d="M212.8 34.0 v3 M223.8 34.0 v3" stroke="#4a661b" stroke-width="2"/><circle cx="85" cy="24" r="2.6" fill="#dfe8d0"/><path d="M25.5 44.5 h25 a3 3 0 0 1 3 3 v4 h-15 v12 h-13 z" fill="#33c83e"/></svg>
<span class="abs t" style="left:394.0px;top:15.8px;font-size:20.5px;line-height:20.5px;color:#666;letter-spacing:-0.2px;">by TECNOLOGY</span>
<span class="abs t" style="left:394.0px;top:45.6px;font-size:20.5px;line-height:20.5px;color:#666;letter-spacing:0.55px;">30.070 views</span>
<span class="abs t" style="left:-33.0px;top:26.0px;font-size:36px;line-height:36px;color:#555;font-weight:bold;">News</span>
<div class="abs" style="left:0.0px;top:0.0px;width:1154.5px;height:2.5px;background:linear-gradient(180deg,rgba(0,0,0,.10),rgba(0,0,0,0));"></div>
<div class="abs" style="left:0.0px;top:0.0px;width:80.0px;height:120.0px;background:linear-gradient(90deg,rgba(0,0,0,.28) 0,rgba(0,0,0,.17) 16px,rgba(0,0,0,.085) 34px,rgba(0,0,0,.035) 54px,rgba(0,0,0,0) 78px);"></div>
</div>
<svg class="abs" style="left:1930px;top:1394px;z-index:5" width="630" height="206" viewBox="1930 1394 630 206"><circle cx="1965.0" cy="1418.4" r="1.6" fill="#dfe6f2" fill-opacity="0.26"/><circle cx="1967.6" cy="1432.9" r="1.9" fill="#dfe6f2" fill-opacity="0.42"/><circle cx="1980.8" cy="1450.9" r="2.2" fill="#dfe6f2" fill-opacity="0.18"/><circle cx="1943.8" cy="1451.4" r="2.2" fill="#dfe6f2" fill-opacity="0.18"/><circle cx="2044.3" cy="1440.3" r="1.9" fill="#dfe6f2" fill-opacity="0.34"/><circle cx="2115.8" cy="1425.0" r="2.2" fill="#dfe6f2" fill-opacity="0.26"/><circle cx="2110.5" cy="1397.2" r="1.6" fill="#dfe6f2" fill-opacity="0.42"/><circle cx="2151.5" cy="1403.8" r="2.2" fill="#dfe6f2" fill-opacity="0.42"/><circle cx="2146.2" cy="1440.3" r="1.9" fill="#dfe6f2" fill-opacity="0.26"/><circle cx="2195.1" cy="1450.9" r="1.6" fill="#dfe6f2" fill-opacity="0.26"/><circle cx="2225.6" cy="1415.7" r="2.2" fill="#dfe6f2" fill-opacity="0.42"/><circle cx="2233.5" cy="1432.9" r="2.2" fill="#dfe6f2" fill-opacity="0.18"/><circle cx="2248.0" cy="1441.4" r="2.2" fill="#dfe6f2" fill-opacity="0.18"/><circle cx="2256.0" cy="1404.3" r="1.6" fill="#dfe6f2" fill-opacity="0.18"/><circle cx="2293.0" cy="1417.0" r="1.9" fill="#dfe6f2" fill-opacity="0.18"/><circle cx="2302.3" cy="1441.4" r="1.9" fill="#dfe6f2" fill-opacity="0.42"/><circle cx="2331.4" cy="1444.8" r="2.2" fill="#dfe6f2" fill-opacity="0.42"/><circle cx="2331.4" cy="1458.8" r="2.2" fill="#dfe6f2" fill-opacity="0.42"/><circle cx="2367.1" cy="1444.8" r="1.9" fill="#dfe6f2" fill-opacity="0.42"/><circle cx="2375.0" cy="1444.8" r="1.6" fill="#dfe6f2" fill-opacity="0.34"/><circle cx="2377.7" cy="1406.5" r="1.6" fill="#dfe6f2" fill-opacity="0.18"/><circle cx="2412.1" cy="1398.5" r="1.6" fill="#dfe6f2" fill-opacity="0.42"/><circle cx="2465.0" cy="1395.9" r="1.6" fill="#dfe6f2" fill-opacity="0.34"/><circle cx="2475.6" cy="1414.4" r="2.2" fill="#dfe6f2" fill-opacity="0.42"/><circle cx="2465.0" cy="1425.0" r="2.2" fill="#dfe6f2" fill-opacity="0.34"/><circle cx="2531.1" cy="1402.5" r="1.9" fill="#dfe6f2" fill-opacity="0.42"/><circle cx="2533.8" cy="1415.2" r="2.2" fill="#dfe6f2" fill-opacity="0.34"/><circle cx="2504.7" cy="1432.9" r="2.2" fill="#dfe6f2" fill-opacity="0.42"/><circle cx="2397.5" cy="1466.0" r="2.2" fill="#dfe6f2" fill-opacity="0.26"/><circle cx="2372.4" cy="1473.9" r="1.9" fill="#dfe6f2" fill-opacity="0.18"/><circle cx="2412.1" cy="1489.3" r="1.9" fill="#dfe6f2" fill-opacity="0.26"/><circle cx="2416.0" cy="1495.6" r="2.2" fill="#dfe6f2" fill-opacity="0.34"/><circle cx="2328.7" cy="1508.8" r="2.2" fill="#dfe6f2" fill-opacity="0.18"/><circle cx="2343.3" cy="1516.8" r="2.2" fill="#dfe6f2" fill-opacity="0.26"/><circle cx="2323.4" cy="1522.9" r="2.2" fill="#dfe6f2" fill-opacity="0.34"/><circle cx="2472.9" cy="1514.4" r="1.9" fill="#dfe6f2" fill-opacity="0.18"/><circle cx="2537.7" cy="1479.2" r="1.6" fill="#dfe6f2" fill-opacity="0.42"/><circle cx="2515.2" cy="1528.1" r="2.2" fill="#dfe6f2" fill-opacity="0.42"/><circle cx="2478.2" cy="1534.2" r="1.6" fill="#dfe6f2" fill-opacity="0.34"/><circle cx="2529.8" cy="1547.2" r="1.6" fill="#dfe6f2" fill-opacity="0.42"/><circle cx="2459.7" cy="1549.3" r="1.6" fill="#dfe6f2" fill-opacity="0.18"/><circle cx="2434.6" cy="1544.0" r="1.9" fill="#dfe6f2" fill-opacity="0.42"/><circle cx="2405.4" cy="1552.0" r="1.9" fill="#dfe6f2" fill-opacity="0.18"/><circle cx="2367.1" cy="1554.1" r="1.6" fill="#dfe6f2" fill-opacity="0.18"/><circle cx="2376.3" cy="1559.9" r="1.9" fill="#dfe6f2" fill-opacity="0.34"/><circle cx="2314.2" cy="1546.1" r="2.2" fill="#dfe6f2" fill-opacity="0.34"/><circle cx="2282.4" cy="1549.3" r="2.2" fill="#dfe6f2" fill-opacity="0.26"/><circle cx="2290.4" cy="1544.0" r="1.6" fill="#dfe6f2" fill-opacity="0.34"/><circle cx="2311.5" cy="1575.8" r="1.6" fill="#dfe6f2" fill-opacity="0.18"/><circle cx="2278.5" cy="1581.1" r="1.6" fill="#dfe6f2" fill-opacity="0.18"/><circle cx="2414.7" cy="1567.8" r="1.6" fill="#dfe6f2" fill-opacity="0.42"/><circle cx="2458.4" cy="1574.4" r="1.9" fill="#dfe6f2" fill-opacity="0.34"/><circle cx="2540.4" cy="1559.9" r="1.6" fill="#dfe6f2" fill-opacity="0.18"/><circle cx="2496.7" cy="1589.0" r="1.9" fill="#dfe6f2" fill-opacity="0.34"/><circle cx="2426.6" cy="1591.6" r="1.9" fill="#dfe6f2" fill-opacity="0.26"/><circle cx="2424.0" cy="1433.7" r="7.7" fill="#cfd8e8" fill-opacity=".16"/><circle cx="2424.0" cy="1433.7" r="4.2" fill="#e8eef8" fill-opacity=".55"/><circle cx="2424.0" cy="1433.7" r="2.2" fill="#fff"/><circle cx="2392.2" cy="1501.2" r="5.8" fill="#cfd8e8" fill-opacity=".16"/><circle cx="2392.2" cy="1501.2" r="3.1" fill="#e8eef8" fill-opacity=".55"/><circle cx="2392.2" cy="1501.2" r="1.7" fill="#fff"/><circle cx="2486.1" cy="1544.8" r="5.8" fill="#cfd8e8" fill-opacity=".16"/><circle cx="2486.1" cy="1544.8" r="3.1" fill="#e8eef8" fill-opacity=".55"/><circle cx="2486.1" cy="1544.8" r="1.7" fill="#fff"/><circle cx="2338.0" cy="1579.7" r="5.8" fill="#cfd8e8" fill-opacity=".16"/><circle cx="2338.0" cy="1579.7" r="3.1" fill="#e8eef8" fill-opacity=".55"/><circle cx="2338.0" cy="1579.7" r="1.7" fill="#fff"/><circle cx="2328.7" cy="1508.8" r="4.8" fill="#cfd8e8" fill-opacity=".16"/><circle cx="2328.7" cy="1508.8" r="2.6" fill="#e8eef8" fill-opacity=".55"/><circle cx="2328.7" cy="1508.8" r="1.4" fill="#fff"/><circle cx="1980.8" cy="1450.9" r="4.8" fill="#cfd8e8" fill-opacity=".16"/><circle cx="1980.8" cy="1450.9" r="2.6" fill="#e8eef8" fill-opacity=".55"/><circle cx="1980.8" cy="1450.9" r="1.4" fill="#fff"/><circle cx="2472.9" cy="1514.4" r="4.8" fill="#cfd8e8" fill-opacity=".16"/><circle cx="2472.9" cy="1514.4" r="2.6" fill="#e8eef8" fill-opacity=".55"/><circle cx="2472.9" cy="1514.4" r="1.4" fill="#fff"/></svg>

<!-- ================= EMULATOR WINDOW ================= -->
<div id="emu" class="abs">
  <div id="emutitle" class="abs"></div>

  <span class="abs" style="left:176px;top:7px;font-size:26.8px;line-height:32px;color:#4c4c4c;white-space:nowrap">5554:Nexus_5_API_22_x86</span>
  <div class="abs" style="left:6px;top:10px;width:24px;height:24px;border-radius:12px;background:#dcdcdc;border:1px solid #c6c6c6"></div>
<svg class="abs" style="left:0;top:44px" width="776" height="1510" viewBox="0 90 776 1510">
<rect x="716" y="282" width="8" height="96" rx="1.5" fill="#404040"/><rect x="717.5" y="284" width="2" height="92" fill="#555"/>
<path d="M-40.0 125.0 L-37.6 124.5 L-34.4 123.9 L-30.7 123.2 L-26.5 122.3 L-22.1 121.5 L-17.4 120.6 L-12.7 119.6 L-8.2 118.8 L-3.9 117.9 L0.0 117.2 L3.6 116.5 L7.0 115.9 L10.4 115.3 L13.7 114.7 L16.9 114.1 L20.1 113.6 L23.3 113.0 L26.5 112.5 L29.7 111.9 L33.0 111.4 L36.3 110.9 L39.6 110.3 L42.9 109.8 L46.2 109.3 L49.5 108.8 L52.8 108.4 L56.1 107.9 L59.4 107.4 L62.7 107.0 L66.0 106.5 L69.3 106.1 L72.6 105.6 L75.9 105.2 L79.2 104.8 L82.5 104.4 L85.8 104.0 L89.1 103.6 L92.4 103.2 L95.7 102.8 L99.0 102.4 L102.3 102.0 L105.6 101.7 L108.9 101.3 L112.2 100.9 L115.5 100.6 L118.8 100.3 L122.1 99.9 L125.4 99.6 L128.7 99.3 L132.0 99.0 L135.3 98.7 L138.6 98.4 L141.9 98.2 L145.2 97.9 L148.5 97.7 L151.8 97.5 L155.1 97.3 L158.4 97.0 L161.7 96.8 L165.0 96.6 L168.3 96.4 L171.6 96.2 L174.9 95.9 L178.2 95.7 L181.5 95.5 L184.8 95.3 L188.1 95.1 L191.4 94.9 L194.7 94.8 L198.0 94.6 L201.2 94.4 L204.1 94.3 L206.9 94.2 L209.6 94.0 L212.4 93.9 L215.4 93.8 L218.7 93.7 L222.3 93.5 L226.4 93.4 L231.0 93.3 L236.4 93.2 L242.4 93.0 L249.0 92.9 L256.0 92.8 L263.2 92.7 L270.5 92.5 L277.6 92.4 L284.6 92.3 L291.1 92.2 L297.0 92.1 L302.4 92.0 L307.3 91.9 L311.9 91.9 L316.3 91.8 L320.6 91.8 L324.8 91.7 L329.0 91.7 L333.4 91.7 L338.0 91.6 L343.0 91.6 L348.2 91.6 L353.5 91.5 L358.9 91.5 L364.4 91.5 L370.0 91.5 L375.7 91.5 L381.6 91.5 L387.6 91.5 L393.7 91.5 L400.0 91.6 L406.5 91.7 L413.2 91.8 L420.0 91.9 L427.1 92.1 L434.2 92.2 L441.4 92.4 L448.6 92.6 L455.8 92.8 L462.9 93.0 L470.0 93.2 L477.1 93.4 L484.5 93.7 L491.9 93.9 L499.4 94.2 L506.9 94.4 L514.2 94.7 L521.2 95.0 L527.9 95.3 L534.2 95.6 L540.0 95.9 L545.2 96.2 L549.9 96.6 L554.2 96.9 L558.2 97.3 L561.9 97.6 L565.5 98.0 L569.0 98.4 L572.5 98.8 L576.2 99.2 L580.0 99.6 L583.9 100.0 L587.8 100.5 L591.7 100.9 L595.6 101.3 L599.5 101.8 L603.4 102.3 L607.3 102.8 L611.2 103.3 L615.1 103.8 L619.0 104.3 L623.0 104.8 L627.1 105.3 L631.2 105.8 L635.4 106.3 L639.6 106.9 L643.7 107.4 L647.7 108.1 L651.6 108.7 L655.4 109.5 L659.0 110.3 L662.5 111.2 L665.9 112.2 L669.2 113.3 L672.4 114.5 L675.6 115.7 L678.6 116.9 L681.4 118.1 L684.1 119.4 L686.7 120.6 L689.0 121.7 L691.1 122.8 L693.0 123.9 L694.8 124.9 L696.3 126.0 L697.8 127.0 L699.1 128.0 L700.3 129.1 L701.6 130.2 L702.8 131.4 L704.0 132.6 L705.2 133.9 L706.4 135.1 L707.6 136.4 L708.7 137.8 L709.7 139.1 L710.7 140.5 L711.6 141.9 L712.5 143.4 L713.3 144.9 L714.0 146.5 L714.6 148.1 L715.2 149.8 L715.6 151.5 L716.0 153.2 L716.4 155.0 L716.6 156.9 L716.9 158.7 L717.1 160.6 L717.3 162.5 L717.5 164.4 L717.7 166.3 L717.8 168.2 L717.9 170.1 L717.9 172.0 L717.9 173.9 L717.9 176.0 L717.9 178.0 L717.9 180.2 L717.9 182.5 L717.9 185.0 L717.9 187.8 L717.9 190.9 L718.0 194.3 L718.0 197.8 L718.0 201.3 L718.0 204.7 L718.0 207.9 L718.0 210.8 L718.0 213.2 L718.0 215.0 L718.0 1700 L-60 1700 Z" fill="#707070"/>
<path d="M-39.8 126.0 L-37.4 125.5 L-34.3 124.9 L-30.5 124.2 L-26.4 123.3 L-21.9 122.4 L-17.2 121.5 L-12.6 120.6 L-8.0 119.7 L-3.7 118.9 L0.2 118.2 L3.8 117.5 L7.2 116.9 L10.6 116.3 L13.9 115.7 L17.1 115.1 L20.3 114.5 L23.5 114.0 L26.7 113.5 L29.9 112.9 L33.2 112.4 L36.5 111.9 L39.8 111.3 L43.1 110.8 L46.3 110.3 L49.6 109.8 L52.9 109.3 L56.2 108.9 L59.5 108.4 L62.8 107.9 L66.1 107.5 L69.4 107.0 L72.7 106.6 L76.0 106.2 L79.3 105.8 L82.6 105.3 L85.9 104.9 L89.2 104.5 L92.5 104.2 L95.8 103.8 L99.1 103.4 L102.4 103.0 L105.7 102.7 L109.0 102.3 L112.3 101.9 L115.6 101.6 L118.9 101.2 L122.2 100.9 L125.5 100.6 L128.8 100.3 L132.1 100.0 L135.4 99.7 L138.7 99.4 L142.0 99.2 L145.3 98.9 L148.6 98.7 L151.9 98.5 L155.2 98.3 L158.5 98.0 L161.8 97.8 L165.1 97.6 L168.4 97.4 L171.7 97.2 L175.0 96.9 L178.3 96.7 L181.6 96.5 L184.9 96.3 L188.2 96.1 L191.5 95.9 L194.8 95.8 L198.1 95.6 L201.2 95.4 L204.1 95.3 L206.9 95.2 L209.7 95.0 L212.5 94.9 L215.5 94.8 L218.7 94.7 L222.3 94.5 L226.4 94.4 L231.0 94.3 L236.4 94.2 L242.4 94.0 L249.0 93.9 L256.0 93.8 L263.2 93.6 L270.5 93.5 L277.6 93.4 L284.6 93.3 L291.1 93.2 L297.0 93.1 L302.4 93.0 L307.3 92.9 L311.9 92.9 L316.3 92.8 L320.6 92.8 L324.8 92.7 L329.0 92.7 L333.4 92.7 L338.1 92.6 L343.0 92.6 L348.2 92.6 L353.5 92.5 L358.9 92.5 L364.4 92.5 L370.0 92.5 L375.7 92.5 L381.6 92.5 L387.6 92.5 L393.7 92.5 L400.0 92.6 L406.5 92.7 L413.2 92.8 L420.0 92.9 L427.0 93.1 L434.2 93.2 L441.4 93.4 L448.6 93.6 L455.8 93.8 L462.9 94.0 L470.0 94.2 L477.1 94.4 L484.4 94.7 L491.9 94.9 L499.4 95.2 L506.8 95.4 L514.1 95.7 L521.2 96.0 L527.9 96.3 L534.2 96.6 L539.9 96.9 L545.2 97.2 L549.9 97.6 L554.2 97.9 L558.1 98.3 L561.8 98.6 L565.4 99.0 L568.9 99.4 L572.4 99.8 L576.1 100.2 L579.9 100.6 L583.8 101.0 L587.7 101.4 L591.6 101.9 L595.5 102.3 L599.4 102.8 L603.3 103.3 L607.1 103.8 L611.0 104.3 L614.9 104.8 L618.9 105.3 L622.9 105.8 L627.0 106.3 L631.1 106.8 L635.3 107.3 L639.4 107.9 L643.5 108.4 L647.5 109.0 L651.4 109.7 L655.2 110.5 L658.8 111.3 L662.2 112.2 L665.6 113.2 L668.9 114.3 L672.1 115.4 L675.2 116.6 L678.2 117.8 L681.0 119.1 L683.7 120.3 L686.2 121.5 L688.6 122.6 L690.7 123.7 L692.5 124.7 L694.2 125.8 L695.7 126.8 L697.1 127.8 L698.4 128.8 L699.7 129.9 L700.9 131.0 L702.1 132.1 L703.3 133.3 L704.5 134.5 L705.7 135.8 L706.8 137.1 L707.9 138.4 L708.9 139.7 L709.9 141.1 L710.8 142.5 L711.6 143.9 L712.4 145.4 L713.1 146.9 L713.7 148.5 L714.2 150.1 L714.7 151.7 L715.0 153.4 L715.4 155.2 L715.6 157.0 L715.9 158.8 L716.1 160.7 L716.3 162.6 L716.5 164.5 L716.7 166.4 L716.8 168.2 L716.9 170.1 L716.9 172.0 L716.9 173.9 L716.9 176.0 L716.9 178.0 L716.9 180.2 L716.9 182.5 L716.9 185.0 L716.9 187.8 L716.9 190.9 L717.0 194.3 L717.0 197.8 L717.0 201.3 L717.0 204.7 L717.0 207.9 L717.0 210.8 L717.0 213.2 L717.0 215.0 L717.0 1700 L-60 1700 Z" fill="#565656"/>
<path d="M-39.5 127.6 L-37.1 127.1 L-33.9 126.5 L-30.2 125.7 L-26.0 124.9 L-21.6 124.0 L-16.9 123.1 L-12.2 122.2 L-7.7 121.3 L-3.4 120.5 L0.5 119.8 L4.1 119.1 L7.5 118.5 L10.9 117.8 L14.2 117.3 L17.4 116.7 L20.6 116.1 L23.8 115.6 L26.9 115.0 L30.2 114.5 L33.4 114.0 L36.7 113.4 L40.0 112.9 L43.3 112.4 L46.6 111.9 L49.9 111.4 L53.2 110.9 L56.5 110.5 L59.8 110.0 L63.1 109.5 L66.4 109.1 L69.6 108.6 L72.9 108.2 L76.2 107.8 L79.5 107.3 L82.8 106.9 L86.1 106.5 L89.4 106.1 L92.7 105.7 L96.0 105.4 L99.3 105.0 L102.6 104.6 L105.9 104.2 L109.2 103.9 L112.5 103.5 L115.8 103.2 L119.1 102.8 L122.4 102.5 L125.6 102.2 L128.9 101.9 L132.2 101.6 L135.5 101.3 L138.8 101.0 L142.1 100.8 L145.4 100.5 L148.7 100.3 L152.0 100.1 L155.3 99.9 L158.6 99.6 L161.9 99.4 L165.2 99.2 L168.5 99.0 L171.8 98.8 L175.1 98.5 L178.4 98.3 L181.7 98.1 L185.0 97.9 L188.3 97.7 L191.5 97.5 L194.8 97.4 L198.1 97.2 L201.3 97.0 L204.2 96.9 L207.0 96.8 L209.7 96.6 L212.5 96.5 L215.5 96.4 L218.8 96.3 L222.4 96.1 L226.4 96.0 L231.1 95.9 L236.4 95.8 L242.5 95.6 L249.1 95.5 L256.0 95.4 L263.2 95.2 L270.5 95.1 L277.7 95.0 L284.6 94.9 L291.1 94.8 L297.0 94.7 L302.4 94.6 L307.3 94.5 L312.0 94.5 L316.3 94.4 L320.6 94.4 L324.8 94.3 L329.0 94.3 L333.4 94.3 L338.1 94.2 L343.0 94.2 L348.2 94.2 L353.5 94.1 L358.9 94.1 L364.4 94.1 L370.0 94.1 L375.7 94.1 L381.6 94.1 L387.6 94.1 L393.7 94.1 L400.0 94.2 L406.4 94.3 L413.1 94.4 L420.0 94.5 L427.0 94.7 L434.1 94.8 L441.3 95.0 L448.5 95.2 L455.7 95.4 L462.9 95.6 L469.9 95.8 L477.1 96.0 L484.4 96.3 L491.9 96.5 L499.3 96.8 L506.8 97.0 L514.1 97.3 L521.1 97.6 L527.8 97.9 L534.1 98.2 L539.8 98.5 L545.0 98.8 L549.7 99.2 L554.0 99.5 L558.0 99.8 L561.7 100.2 L565.2 100.6 L568.7 101.0 L572.3 101.4 L575.9 101.8 L579.7 102.2 L583.7 102.6 L587.6 103.0 L591.4 103.5 L595.3 103.9 L599.2 104.4 L603.1 104.9 L606.9 105.3 L610.8 105.8 L614.7 106.4 L618.7 106.9 L622.7 107.4 L626.8 107.9 L630.9 108.4 L635.1 108.9 L639.2 109.5 L643.3 110.0 L647.3 110.6 L651.2 111.3 L654.9 112.0 L658.4 112.8 L661.8 113.7 L665.1 114.7 L668.4 115.8 L671.5 116.9 L674.6 118.1 L677.6 119.3 L680.4 120.5 L683.0 121.7 L685.5 122.9 L687.8 124.0 L689.9 125.1 L691.7 126.1 L693.4 127.1 L694.8 128.1 L696.2 129.1 L697.4 130.1 L698.6 131.1 L699.8 132.1 L701.0 133.3 L702.2 134.4 L703.4 135.7 L704.5 136.9 L705.6 138.1 L706.6 139.4 L707.6 140.7 L708.6 142.0 L709.4 143.3 L710.2 144.7 L710.9 146.1 L711.6 147.5 L712.2 149.0 L712.7 150.5 L713.1 152.1 L713.5 153.8 L713.8 155.5 L714.1 157.2 L714.3 159.0 L714.5 160.9 L714.7 162.8 L714.9 164.6 L715.1 166.5 L715.2 168.3 L715.3 170.2 L715.3 172.0 L715.3 174.0 L715.3 175.9 L715.3 178.0 L715.3 180.2 L715.3 182.6 L715.3 185.0 L715.3 187.8 L715.3 190.9 L715.4 194.3 L715.4 197.8 L715.4 201.3 L715.4 204.7 L715.4 207.9 L715.4 210.8 L715.4 213.2 L715.4 215.0 L715.4 1700 L-60 1700 Z" fill="#3f3f3f"/>
<path d="M-39.1 129.5 L-36.7 129.0 L-33.6 128.4 L-29.8 127.7 L-25.7 126.9 L-21.2 126.0 L-16.5 125.1 L-11.9 124.2 L-7.3 123.3 L-3.0 122.5 L0.8 121.7 L4.4 121.1 L7.9 120.4 L11.2 119.8 L14.5 119.2 L17.7 118.6 L20.9 118.1 L24.1 117.5 L27.3 117.0 L30.5 116.5 L33.7 115.9 L37.0 115.4 L40.3 114.9 L43.6 114.4 L46.9 113.9 L50.2 113.4 L53.5 112.9 L56.8 112.4 L60.0 112.0 L63.3 111.5 L66.6 111.1 L69.9 110.6 L73.2 110.2 L76.5 109.8 L79.8 109.3 L83.1 108.9 L86.4 108.5 L89.6 108.1 L92.9 107.7 L96.2 107.3 L99.5 107.0 L102.8 106.6 L106.1 106.2 L109.4 105.9 L112.7 105.5 L116.0 105.2 L119.3 104.8 L122.6 104.5 L125.8 104.2 L129.1 103.9 L132.4 103.6 L135.7 103.3 L139.0 103.0 L142.2 102.8 L145.5 102.5 L148.8 102.3 L152.1 102.1 L155.4 101.8 L158.7 101.6 L162.0 101.4 L165.3 101.2 L168.6 101.0 L171.9 100.8 L175.2 100.5 L178.5 100.3 L181.8 100.1 L185.1 99.9 L188.4 99.7 L191.7 99.5 L194.9 99.4 L198.2 99.2 L201.4 99.0 L204.3 98.9 L207.1 98.8 L209.8 98.6 L212.6 98.5 L215.6 98.4 L218.8 98.3 L222.4 98.1 L226.5 98.0 L231.1 97.9 L236.5 97.8 L242.5 97.6 L249.1 97.5 L256.1 97.4 L263.3 97.2 L270.5 97.1 L277.7 97.0 L284.6 96.9 L291.1 96.8 L297.1 96.7 L302.4 96.6 L307.4 96.5 L312.0 96.5 L316.4 96.4 L320.6 96.4 L324.8 96.3 L329.1 96.3 L333.4 96.3 L338.1 96.2 L343.0 96.2 L348.2 96.2 L353.5 96.1 L358.9 96.1 L364.4 96.1 L370.0 96.1 L375.7 96.1 L381.6 96.1 L387.6 96.1 L393.7 96.1 L399.9 96.2 L406.4 96.3 L413.1 96.4 L420.0 96.5 L427.0 96.7 L434.1 96.8 L441.3 97.0 L448.5 97.2 L455.7 97.4 L462.8 97.6 L469.9 97.8 L477.0 98.0 L484.3 98.3 L491.8 98.5 L499.3 98.8 L506.7 99.0 L514.0 99.3 L521.0 99.6 L527.7 99.9 L534.0 100.2 L539.7 100.5 L544.9 100.8 L549.6 101.1 L553.8 101.5 L557.8 101.8 L561.5 102.2 L565.0 102.6 L568.5 103.0 L572.0 103.4 L575.7 103.8 L579.5 104.2 L583.4 104.6 L587.3 105.0 L591.2 105.5 L595.1 105.9 L599.0 106.4 L602.8 106.8 L606.7 107.3 L610.6 107.8 L614.5 108.3 L618.4 108.9 L622.4 109.4 L626.5 109.9 L630.7 110.4 L634.8 110.9 L639.0 111.4 L643.0 112.0 L647.0 112.6 L650.8 113.3 L654.4 114.0 L657.9 114.8 L661.2 115.7 L664.5 116.6 L667.7 117.7 L670.8 118.8 L673.9 120.0 L676.8 121.2 L679.6 122.4 L682.2 123.5 L684.7 124.7 L686.9 125.8 L689.0 126.9 L690.7 127.8 L692.3 128.8 L693.7 129.7 L695.0 130.7 L696.2 131.6 L697.3 132.6 L698.4 133.6 L699.6 134.7 L700.7 135.9 L701.9 137.0 L703.0 138.2 L704.1 139.4 L705.1 140.6 L706.0 141.8 L706.9 143.1 L707.7 144.4 L708.5 145.6 L709.2 147.0 L709.8 148.3 L710.3 149.7 L710.8 151.1 L711.2 152.6 L711.5 154.2 L711.8 155.8 L712.1 157.5 L712.3 159.3 L712.5 161.1 L712.7 163.0 L712.9 164.8 L713.1 166.7 L713.2 168.4 L713.3 170.2 L713.3 172.1 L713.3 174.0 L713.3 175.9 L713.3 178.0 L713.3 180.2 L713.3 182.6 L713.3 185.0 L713.3 187.8 L713.3 190.9 L713.4 194.3 L713.4 197.8 L713.4 201.3 L713.4 204.7 L713.4 207.9 L713.4 210.8 L713.4 213.2 L713.4 215.0 L713.4 1700 L-60 1700 Z" fill="#2b2b2b"/>
<path d="M-38.7 131.5 L-36.3 131.0 L-33.2 130.4 L-29.4 129.6 L-25.3 128.8 L-20.8 127.9 L-16.1 127.0 L-11.5 126.1 L-6.9 125.2 L-2.7 124.4 L1.2 123.7 L4.8 123.0 L8.2 122.4 L11.6 121.8 L14.9 121.2 L18.1 120.6 L21.3 120.1 L24.4 119.5 L27.6 119.0 L30.8 118.4 L34.1 117.9 L37.3 117.4 L40.6 116.9 L43.9 116.4 L47.2 115.9 L50.5 115.4 L53.8 114.9 L57.0 114.4 L60.3 113.9 L63.6 113.5 L66.9 113.0 L70.2 112.6 L73.5 112.2 L76.7 111.7 L80.0 111.3 L83.3 110.9 L86.6 110.5 L89.9 110.1 L93.2 109.7 L96.5 109.3 L99.7 109.0 L103.0 108.6 L106.3 108.2 L109.6 107.9 L112.9 107.5 L116.2 107.2 L119.5 106.8 L122.7 106.5 L126.0 106.2 L129.3 105.9 L132.6 105.6 L135.8 105.3 L139.1 105.0 L142.4 104.8 L145.7 104.5 L149.0 104.3 L152.3 104.1 L155.5 103.8 L158.8 103.6 L162.1 103.4 L165.4 103.2 L168.7 103.0 L172.0 102.7 L175.3 102.5 L178.6 102.3 L181.9 102.1 L185.2 101.9 L188.5 101.7 L191.8 101.5 L195.0 101.4 L198.3 101.2 L201.5 101.0 L204.4 100.9 L207.2 100.7 L209.9 100.6 L212.7 100.5 L215.7 100.4 L218.9 100.3 L222.5 100.1 L226.5 100.0 L231.2 99.9 L236.5 99.8 L242.5 99.6 L249.1 99.5 L256.1 99.4 L263.3 99.2 L270.6 99.1 L277.7 99.0 L284.7 98.9 L291.2 98.8 L297.1 98.7 L302.5 98.6 L307.4 98.5 L312.0 98.5 L316.4 98.4 L320.6 98.4 L324.8 98.3 L329.1 98.3 L333.5 98.3 L338.1 98.2 L343.0 98.2 L348.2 98.2 L353.5 98.1 L358.9 98.1 L364.4 98.1 L370.0 98.1 L375.7 98.1 L381.6 98.1 L387.6 98.1 L393.7 98.1 L399.9 98.2 L406.4 98.3 L413.1 98.4 L419.9 98.5 L426.9 98.7 L434.0 98.8 L441.2 99.0 L448.4 99.2 L455.6 99.4 L462.7 99.6 L469.8 99.8 L476.9 100.0 L484.3 100.3 L491.7 100.5 L499.2 100.7 L506.6 101.0 L513.9 101.3 L520.9 101.6 L527.6 101.9 L533.9 102.2 L539.6 102.5 L544.8 102.8 L549.4 103.1 L553.7 103.5 L557.6 103.8 L561.3 104.2 L564.8 104.6 L568.3 104.9 L571.8 105.3 L575.5 105.7 L579.3 106.2 L583.2 106.6 L587.1 107.0 L591.0 107.5 L594.9 107.9 L598.7 108.4 L602.6 108.8 L606.4 109.3 L610.3 109.8 L614.2 110.3 L618.1 110.8 L622.2 111.4 L626.3 111.9 L630.4 112.4 L634.6 112.9 L638.7 113.4 L642.7 114.0 L646.7 114.6 L650.4 115.2 L654.0 115.9 L657.4 116.7 L660.7 117.6 L663.9 118.5 L667.1 119.6 L670.1 120.7 L673.1 121.8 L676.0 123.0 L678.8 124.2 L681.4 125.4 L683.8 126.5 L686.0 127.6 L688.0 128.6 L689.7 129.6 L691.2 130.5 L692.5 131.4 L693.8 132.2 L694.9 133.1 L696.0 134.1 L697.1 135.1 L698.2 136.1 L699.3 137.3 L700.5 138.4 L701.5 139.6 L702.6 140.7 L703.5 141.9 L704.4 143.0 L705.2 144.2 L706.0 145.4 L706.7 146.6 L707.4 147.8 L707.9 149.1 L708.4 150.3 L708.8 151.7 L709.2 153.1 L709.6 154.6 L709.8 156.1 L710.1 157.8 L710.3 159.5 L710.5 161.3 L710.7 163.2 L710.9 165.0 L711.1 166.8 L711.2 168.5 L711.3 170.3 L711.3 172.1 L711.3 174.0 L711.3 175.9 L711.3 178.0 L711.3 180.2 L711.3 182.6 L711.3 185.0 L711.3 187.8 L711.3 190.9 L711.4 194.3 L711.4 197.8 L711.4 201.3 L711.4 204.7 L711.4 207.9 L711.4 210.8 L711.4 213.2 L711.4 215.0 L711.4 1700 L-60 1700 Z" fill="#181818"/>
<path d="M-10 1549 C 80 1570 200 1584 343 1588 L343 1700 L-10 1700 Z" fill="#838383"/>
<circle cx="92" cy="167" r="9.5" fill="#23252e"/><circle cx="92" cy="167" r="6.2" fill="#2b3a7c"/><circle cx="92" cy="168.5" r="4" fill="#55608f"/><circle cx="91.5" cy="164.5" r="2" fill="#dfe6ff"/>
<defs><pattern id="spk" width="3" height="3" patternUnits="userSpaceOnUse"><rect width="3" height="3" fill="#4a4a4a"/><rect width="1.6" height="1.6" fill="#1c1c1c"/><rect x="1.5" y="1.5" width="1.5" height="1.5" fill="#262626"/></pattern></defs>
<circle cx="343" cy="165.5" r="16.5" fill="url(#spk)"/>
<circle cx="581" cy="164" r="6.5" fill="#1e1e1e"/><circle cx="606" cy="164" r="4" fill="#1d1d1d"/>
</svg>
  <!-- screen: abs x 0..684, y 212..1427 -->
  <div id="screen" class="abs" style="left:0;top:166px;width:684px;height:1216px;background:#eeeeee;overflow:hidden">
<div class="abs" style="left:0.0px;top:0.0px;width:684.0px;height:48.0px;background:#777777;"></div>
<span class="abs t" style="left:535.5px;top:10.6px;font-size:13.5px;line-height:13.5px;color:#fff;font-weight:bold;letter-spacing:-0.5px;">3G</span>
<svg class="abs" style="left:541px;top:11px" width="28" height="28" viewBox="0 0 28 28"><path d="M1 27 L27 1 L27 27 Z" fill="#fff"/><path d="M21 7 L27 1 L27 27 L21 27 Z" fill="#b4b4b4"/></svg>
<svg class="abs" style="left:584px;top:10px" width="19" height="29" viewBox="0 0 19 29"><path d="M5 0h9v3h5v26H0V3h5z" fill="#a9a9a9"/><rect x="0" y="14" width="19" height="15" fill="#fff"/><path d="M11 7 L5 16 h4 l-2 7 l7 -10 h-4 z" fill="#777"/></svg>
<span class="abs t" style="left:617.0px;top:12.0px;font-size:26px;line-height:26px;color:#fff;-webkit-text-stroke:0.4px #fff;">3:25</span>
<div class="abs" style="left:0.0px;top:48.0px;width:684.0px;height:105.5px;background:#eeeeee;"></div>
<div class="abs" style="left:0.0px;top:153.5px;width:684.0px;height:9.0px;background:linear-gradient(180deg,rgba(0,0,0,.17) 0,rgba(0,0,0,.10) 35%,rgba(0,0,0,.03) 75%,rgba(0,0,0,0) 100%);"></div>
<span class="abs t" style="left:31.5px;top:83.2px;font-size:38.2px;line-height:38.2px;color:#212121;-webkit-text-stroke:0.7px #212121;">EditText</span>
<div class="abs" style="left:638.0px;top:85.0px;width:8.0px;height:8.0px;background:#222;border-radius:2.5px;"></div>
<div class="abs" style="left:638.0px;top:96.5px;width:8.0px;height:8.0px;background:#222;border-radius:2.5px;"></div>
<div class="abs" style="left:638.0px;top:108.0px;width:8.0px;height:8.0px;background:#222;border-radius:2.5px;"></div>
<span class="abs t" style="left:214.8px;top:211.5px;font-size:34.3px;line-height:34.3px;color:#222;letter-spacing:-0.6px;">mark</span>
<div class="abs" style="left:214.5px;top:243.0px;width:75.0px;height:2.2px;background:#555;"></div>
<div class="abs" style="left:290.5px;top:204.0px;width:2.2px;height:45.0px;background:#009688;"></div>
<div class="abs" style="left:214.0px;top:254.0px;width:256.0px;height:4.0px;background:#16a092;"></div>
<div class="abs" style="left:197.0px;top:406.0px;width:289.5px;height:69.0px;background:#d6d7d7;border-radius:4px;box-shadow:0 1px 2px rgba(0,0,0,.35),0 2px 2px rgba(0,0,0,.12);"></div>
<span class="abs t" style="left:141.5px;width:400px;text-align:center;top:428.8px;font-size:26.2px;line-height:26.2px;color:#212121;letter-spacing:-0.75px;-webkit-text-stroke:0.55px #212121;">DISPLAY TEXT INPUT</span>
<div class="abs" style="left:0.0px;top:626.0px;width:684.0px;height:75.0px;background:#e4e7e9;"></div>
<div class="abs" style="left:0.0px;top:700.5px;width:684.0px;height:425.0px;background:#eceff1;"></div>
<div class="abs" style="left:242.5px;top:640.0px;width:1.6px;height:46.0px;background:#ccd1d4;"></div>
<div class="abs" style="left:440.5px;top:640.0px;width:1.6px;height:46.0px;background:#ccd1d4;"></div>
<span class="abs t" style="left:-44.7px;width:400px;text-align:center;top:649.6px;font-size:33.6px;line-height:33.6px;color:#7a868c;">market</span>
<span class="abs t" style="left:142.0px;width:400px;text-align:center;top:649.6px;font-size:33.6px;line-height:33.6px;color:#7a868c;">Mark</span>
<span class="abs t" style="left:329.0px;width:400px;text-align:center;top:649.6px;font-size:33.6px;line-height:33.6px;color:#7a868c;">marked</span>
<div class="abs" style="left:328.0px;top:693.0px;width:4.5px;height:4.0px;background:#37474f;border-radius:1px;"></div>
<div class="abs" style="left:339.6px;top:693.0px;width:4.5px;height:4.0px;background:#37474f;border-radius:1px;"></div>
<div class="abs" style="left:351.2px;top:693.0px;width:4.5px;height:4.0px;background:#37474f;border-radius:1px;"></div>
<span class="abs t" style="left:-145.0px;width:400px;text-align:center;top:714.3px;font-size:18px;line-height:18px;color:#7d888e;">1</span>
<span class="abs t" style="left:-76.6px;width:400px;text-align:center;top:714.3px;font-size:18px;line-height:18px;color:#7d888e;">2</span>
<span class="abs t" style="left:-8.2px;width:400px;text-align:center;top:714.3px;font-size:18px;line-height:18px;color:#7d888e;">3</span>
<span class="abs t" style="left:60.2px;width:400px;text-align:center;top:714.3px;font-size:18px;line-height:18px;color:#7d888e;">4</span>
<span class="abs t" style="left:128.6px;width:400px;text-align:center;top:714.3px;font-size:18px;line-height:18px;color:#7d888e;">5</span>
<span class="abs t" style="left:197.0px;width:400px;text-align:center;top:714.3px;font-size:18px;line-height:18px;color:#7d888e;">6</span>
<span class="abs t" style="left:265.4px;width:400px;text-align:center;top:714.3px;font-size:18px;line-height:18px;color:#7d888e;">7</span>
<span class="abs t" style="left:333.8px;width:400px;text-align:center;top:714.3px;font-size:18px;line-height:18px;color:#7d888e;">8</span>
<span class="abs t" style="left:402.2px;width:400px;text-align:center;top:714.3px;font-size:18px;line-height:18px;color:#7d888e;">9</span>
<span class="abs t" style="left:470.6px;width:400px;text-align:center;top:714.3px;font-size:18px;line-height:18px;color:#7d888e;">0</span>
<span class="abs t key" style="left:-165.8px;width:400px;text-align:center;top:731.7px;font-size:42px;line-height:42px;color:#37474f;">q</span>
<span class="abs t key" style="left:-97.4px;width:400px;text-align:center;top:731.7px;font-size:42px;line-height:42px;color:#37474f;">w</span>
<span class="abs t key" style="left:-29.0px;width:400px;text-align:center;top:731.7px;font-size:42px;line-height:42px;color:#37474f;">e</span>
<span class="abs t key" style="left:39.4px;width:400px;text-align:center;top:731.7px;font-size:42px;line-height:42px;color:#37474f;">r</span>
<span class="abs t key" style="left:107.8px;width:400px;text-align:center;top:731.7px;font-size:42px;line-height:42px;color:#37474f;">t</span>
<span class="abs t key" style="left:176.2px;width:400px;text-align:center;top:731.7px;font-size:42px;line-height:42px;color:#37474f;">y</span>
<span class="abs t key" style="left:244.6px;width:400px;text-align:center;top:731.7px;font-size:42px;line-height:42px;color:#37474f;">u</span>
<span class="abs t key" style="left:313.0px;width:400px;text-align:center;top:731.7px;font-size:42px;line-height:42px;color:#37474f;">i</span>
<span class="abs t key" style="left:381.4px;width:400px;text-align:center;top:731.7px;font-size:42px;line-height:42px;color:#37474f;">o</span>
<span class="abs t key" style="left:449.8px;width:400px;text-align:center;top:731.7px;font-size:42px;line-height:42px;color:#37474f;">p</span>
<span class="abs t key" style="left:-131.6px;width:400px;text-align:center;top:836.6px;font-size:42px;line-height:42px;color:#37474f;">a</span>
<span class="abs t key" style="left:-63.2px;width:400px;text-align:center;top:836.6px;font-size:42px;line-height:42px;color:#37474f;">s</span>
<span class="abs t key" style="left:5.2px;width:400px;text-align:center;top:836.6px;font-size:42px;line-height:42px;color:#37474f;">d</span>
<span class="abs t key" style="left:73.6px;width:400px;text-align:center;top:836.6px;font-size:42px;line-height:42px;color:#37474f;">f</span>
<span class="abs t key" style="left:142.0px;width:400px;text-align:center;top:836.6px;font-size:42px;line-height:42px;color:#37474f;">g</span>
<span class="abs t key" style="left:210.4px;width:400px;text-align:center;top:836.6px;font-size:42px;line-height:42px;color:#37474f;">h</span>
<span class="abs t key" style="left:278.8px;width:400px;text-align:center;top:836.6px;font-size:42px;line-height:42px;color:#37474f;">j</span>
<span class="abs t key" style="left:347.2px;width:400px;text-align:center;top:836.6px;font-size:42px;line-height:42px;color:#37474f;">k</span>
<span class="abs t key" style="left:415.6px;width:400px;text-align:center;top:836.6px;font-size:42px;line-height:42px;color:#37474f;">l</span>
<span class="abs t key" style="left:-63.2px;width:400px;text-align:center;top:940.6px;font-size:42px;line-height:42px;color:#37474f;">z</span>
<span class="abs t key" style="left:5.2px;width:400px;text-align:center;top:940.6px;font-size:42px;line-height:42px;color:#37474f;">x</span>
<span class="abs t key" style="left:73.6px;width:400px;text-align:center;top:940.6px;font-size:42px;line-height:42px;color:#37474f;">c</span>
<span class="abs t key" style="left:142.0px;width:400px;text-align:center;top:940.6px;font-size:42px;line-height:42px;color:#37474f;">v</span>
<span class="abs t key" style="left:210.4px;width:400px;text-align:center;top:940.6px;font-size:42px;line-height:42px;color:#37474f;">b</span>
<span class="abs t key" style="left:278.8px;width:400px;text-align:center;top:940.6px;font-size:42px;line-height:42px;color:#37474f;">n</span>
<span class="abs t key" style="left:347.2px;width:400px;text-align:center;top:940.6px;font-size:42px;line-height:42px;color:#37474f;">m</span>
<svg class="abs" style="left:24px;top:941px" width="48" height="60" viewBox="0 0 48 60"><path d="M23.5 1.5 L45 24 H33 V36.5 H14 V24 H2 Z" fill="#838e92"/><rect x="9.8" y="53" width="27.8" height="3.8" fill="#838e92"/></svg>
<svg class="abs" style="left:612px;top:941px" width="48" height="38" viewBox="0 0 48 38"><path d="M14 1.5 H44 a2 2 0 0 1 2 2 V34.5 a2 2 0 0 1 -2 2 H14 L1.5 19 Z" fill="#838e92"/><path d="M20.5 11 L35.5 27 M35.5 11 L20.5 27" stroke="#eceff1" stroke-width="4.2"/></svg>
<span class="abs t" style="left:23.0px;top:1053.1px;font-size:25px;line-height:25px;color:#6a7378;letter-spacing:0px;">?123</span>
<svg class="abs" style="left:128px;top:1072px" width="16" height="16" viewBox="0 0 16 16"><path d="M8.5 2 h4.2 l-3.6 11 h-2.6 z" fill="#37474f"/></svg>
<div class="abs" style="left:176.0px;top:1042.0px;width:332.0px;height:46.0px;background:#d3d7da;border-radius:8px;"></div>
<div class="abs" style="left:544.5px;top:1076.5px;width:4.5px;height:4.5px;background:#37474f;border-radius:1.5px;"></div>
<div class="abs" style="left:599.0px;top:1031.3px;width:67.4px;height:67.4px;background:#4db6ac;border-radius:50%;"></div>
<svg class="abs" style="left:599px;top:1031.3px" width="67.4" height="67.4" viewBox="0 0 67.4 67.4"><path d="M50 25 V36.5 H19" fill="none" stroke="#fff" stroke-width="4"/><path d="M28.5 27 L18.5 36.5 L28.5 46" fill="none" stroke="#fff" stroke-width="4"/></svg>
<div class="abs" style="left:0.0px;top:1123.5px;width:684.0px;height:93.0px;background:#000;"></div>
<svg class="abs" style="left:0;top:1123.5px" width="684" height="93" viewBox="0 1335.5 684 93" fill="none" stroke="#fff" stroke-width="3.4"><path d="M135.5 1368.7 H169 L152.3 1393.5 Z" stroke-linejoin="round"/><circle cx="342" cy="1381.8" r="14.4"/><rect x="518.3" y="1368.7" width="27.6" height="27.6" rx="1.5"/></svg>
  </div>

</div>

<!-- ================= MENU BAR ================= -->
<div id="menubar" class="abs">
  <span style="left:108px;font-weight:bold;font-size:29px;letter-spacing:.35px">emulator64-x86</span>
  <span style="left:361.5px;font-size:29px;letter-spacing:.45px">Window</span>
  <span style="left:503.8px">View</span>
<svg class="abs" style="left:42px;top:3.6px" width="27.2" height="33" viewBox="0 0 29 34" preserveAspectRatio="none"><path d="M19.300 0.500 C19.700 3 18.800 5 17.500 6.500 C16.200 8 14.200 9 12.400 8.800 C12 6.500 13 4.500 14.200 3.200 C15.500 1.700 17.600 0.700 19.300 0.500 Z M25.300 11.600 C23.300 12.900 22 14.800 22.100 17.300 C22.200 20.300 24 22.300 26.600 23.300 C26 25.200 25.200 26.800 24.100 28.400 C22.700 30.400 21.300 32.300 19 32.400 C16.800 32.500 16.100 31.100 13.600 31.100 C11.100 31.100 10.300 32.400 8.200 32.500 C6 32.600 4.300 30.400 2.900 28.400 C0 24.200 -1.100 17.500 1.600 13.300 C3 11.100 5.500 9.700 8.100 9.700 C10.300 9.600 12.300 11.100 13.600 11.100 C14.900 11.100 17.400 9.400 20.100 9.600 C21.200 9.700 23.700 10.100 25.300 11.600 Z" fill="#15181c"/></svg>
<svg class="abs" style="left:1957px;top:8px" width="38" height="29" viewBox="0 0 38 29"><path d="M9 20.500 H1.300 V1.300 H36.700 V20.500 H29" fill="none" stroke="#1b222c" stroke-width="2.400"/><path d="M19 14.500 L30.500 28.500 H7.500 Z" fill="#1b222c"/></svg>
<svg class="abs" style="left:2016px;top:6px" width="42" height="31" viewBox="0 0 42 31"><g fill="none" stroke="#1b222c" stroke-width="3"><path d="M2 11.500 A27.500 27.500 0 0 1 40 11.500"/><path d="M8 17.800 A19 19 0 0 1 34 17.800"/><path d="M14 23.800 A10.500 10.500 0 0 1 28 23.800"/></g><path d="M21 30.500 L17.200 26.400 A5.500 5.500 0 0 1 24.800 26.400 Z" fill="#1b222c"/></svg>
<span style="left:2080px;top:8px;font-size:25.500px;line-height:28px;color:#1b222c">41%</span>
<svg class="abs" style="left:2141px;top:10px" width="48" height="25" viewBox="0 0 48 25"><path d="M12 1.500 H5 a3.500 3.500 0 0 0 -3.500 3.500 V20 a3.500 3.500 0 0 0 3.500 3.500 H12 M28 1.500 H36 a3.500 3.500 0 0 1 3.500 3.500 V20 a3.500 3.500 0 0 1 -3.500 3.500 H28" fill="none" stroke="#1b222c" stroke-width="2.400"/><path d="M24.500 0.500 L13.500 14 H20 L16.500 24.500 L28.500 10.500 H21.500 Z" fill="#1b222c"/><path d="M42.500 8.500 C45.500 9 45.500 16 42.500 16.500 Z" fill="#1b222c"/></svg>
<span style="left:2216px;top:5px;font-size:28.700px;line-height:34px;color:#1b222c">Thu 3:25 PM</span>
<svg class="abs" style="left:2417px;top:8px" width="32" height="30" viewBox="0 0 32 30"><circle cx="12" cy="12" r="9.300" fill="none" stroke="#1b222c" stroke-width="2.800"/><path d="M18.800 18.800 L29 28.500" stroke="#1b222c" stroke-width="3.200" stroke-linecap="round"/></svg>
<svg class="abs" style="left:2478px;top:11px" width="38" height="22" viewBox="0 0 38 22"><g fill="#1b222c"><rect x="0" y="0.500" width="4.500" height="4.600"/><rect x="8.500" y="0.500" width="28.500" height="4.600"/><rect x="0" y="8.800" width="4.500" height="4.600"/><rect x="8.500" y="8.800" width="28.500" height="4.600"/><rect x="0" y="17" width="4.500" height="4.600"/><rect x="8.500" y="17" width="28.500" height="4.600"/></g></svg>
</div>
<div id="menuline" class="abs"></div>

<!-- ================= DOCK ================= -->
<div class="abs" style="left:284px;top:1456px;width:1992px;height:150px;border-radius:9px 9px 0 0;overflow:hidden;z-index:60;background:linear-gradient(90deg,#696767 0px,#6c6a6a 120px,#757373 300px,#7e7c7c 400px,#8a898a 445px,#9b9c9d 480px,#b0b3b5 520px,#c4c8cb 570px,#d2d6d8 640px,#dcdfe0 800px,#dfe2e4 1300px,#d8dce0 1500px,#c3c8cf 1560px,#9a9fa9 1620px,#747a86 1680px,#5e6571 1740px,#565d6a 1992px);box-shadow:0 0 0 1px rgba(255,255,255,.10) inset"><div class="abs" style="left:0;top:0;width:1992px;height:150px;background:linear-gradient(180deg,rgba(110,140,185,0) 0%,rgba(110,140,185,0) 12%,rgba(100,124,160,.52) 70%,rgba(94,118,156,.70) 100%);-webkit-mask-image:linear-gradient(90deg,transparent 420px,#000 640px,#000 1540px,transparent 1730px);mask-image:linear-gradient(90deg,transparent 420px,#000 640px,#000 1540px,transparent 1730px)"></div><div class="abs" style="left:0;top:0;width:470px;height:150px;background:linear-gradient(180deg,rgba(255,255,255,0) 80%,rgba(255,255,255,.09) 92%);-webkit-mask-image:linear-gradient(90deg,#000 55%,transparent 100%);mask-image:linear-gradient(90deg,#000 55%,transparent 100%)"></div></div>
<svg class="abs" style="left:284px;top:1456px;z-index:61" width="1992" height="144" viewBox="284 1456 1992 144">
<defs>
<linearGradient id="gFinL" x1="0" y1="0" x2="0" y2="1"><stop offset="0" stop-color="#22b4f7"/><stop offset="1" stop-color="#2b73e6"/></linearGradient>
<linearGradient id="gFinR" x1="0" y1="0" x2="0" y2="1"><stop offset="0" stop-color="#f7f9fb"/><stop offset="1" stop-color="#d9e1ea"/></linearGradient>
<linearGradient id="gItu" x1="0" y1="0" x2="0" y2="1"><stop offset="0" stop-color="#fb6a73"/><stop offset="0.5" stop-color="#f23a4e"/><stop offset="1" stop-color="#e41b42"/></linearGradient>
<radialGradient id="gFfG" cx="0.5" cy="0.2" r="0.85"><stop offset="0" stop-color="#46b4ea"/><stop offset="0.45" stop-color="#1f7cc4"/><stop offset="0.8" stop-color="#123f7e"/><stop offset="1" stop-color="#0e2a5a"/></radialGradient>
<linearGradient id="gFfF" x1="0" y1="0" x2="0.3" y2="1"><stop offset="0" stop-color="#f89a1e"/><stop offset="0.5" stop-color="#f0701c"/><stop offset="1" stop-color="#e4431e"/></linearGradient>
<linearGradient id="gEcl" x1="0" y1="0" x2="0" y2="1"><stop offset="0" stop-color="#2c2355"/><stop offset="0.6" stop-color="#2a225c"/><stop offset="1" stop-color="#3b2f7a"/></linearGradient>
<radialGradient id="gSpk" cx="0.5" cy="0.5" r="0.5"><stop offset="0" stop-color="#5e5e5e"/><stop offset="0.2" stop-color="#7a7a7a"/><stop offset="0.27" stop-color="#9a9a9a"/><stop offset="0.32" stop-color="#b9b9b9"/><stop offset="0.6" stop-color="#e9e9e9"/><stop offset="0.74" stop-color="#f4f4f4"/><stop offset="0.78" stop-color="#a0a0a0"/><stop offset="0.82" stop-color="#1c1c1c"/><stop offset="0.9" stop-color="#2a2a2a"/><stop offset="0.93" stop-color="#8d8d8d"/><stop offset="1" stop-color="#6a6a6a"/></radialGradient>
<linearGradient id="gCubL" x1="0" y1="0" x2="1" y2="1"><stop offset="0" stop-color="#86a6ea"/><stop offset="1" stop-color="#a9c3ee"/></linearGradient>
<linearGradient id="gCubR" x1="0" y1="0" x2="1" y2="1"><stop offset="0" stop-color="#e6f2f5"/><stop offset="1" stop-color="#b7cfdc"/></linearGradient>
<radialGradient id="gPT" cx="0.5" cy="0.55" r="0.5"><stop offset="0" stop-color="#7a2cae"/><stop offset="0.55" stop-color="#4a1478"/><stop offset="1" stop-color="#26083c"/></radialGradient>
<linearGradient id="gGH" x1="0" y1="0" x2="0" y2="1"><stop offset="0" stop-color="#4b2a86"/><stop offset="1" stop-color="#8a2fa6"/></linearGradient>
<linearGradient id="gXc" x1="0" y1="0" x2="0" y2="1"><stop offset="0" stop-color="#3fb0f2"/><stop offset="1" stop-color="#1f7fe0"/></linearGradient>
<linearGradient id="gHam" x1="0" y1="0" x2="1" y2="0"><stop offset="0" stop-color="#e8e8e8"/><stop offset="0.5" stop-color="#a9a9a9"/><stop offset="1" stop-color="#d8d8d8"/></linearGradient>
<linearGradient id="gTr" x1="0" y1="0" x2="1" y2="0"><stop offset="0" stop-color="#c2c2c4"/><stop offset="0.35" stop-color="#e9e9ea"/><stop offset="0.7" stop-color="#dadadb"/><stop offset="1" stop-color="#b4b4b7"/></linearGradient>
<clipPath id="cFin"><rect x="306.500" y="1481" width="91" height="85.500" rx="6"/></clipPath>
<clipPath id="cGH"><circle cx="1674.400" cy="1523.300" r="49"/></clipPath>
<clipPath id="cAS"><circle cx="952.200" cy="1519.400" r="47"/></clipPath>
</defs>
<g>
<g clip-path="url(#cFin)"><rect x="306.500" y="1481" width="91" height="85.500" fill="url(#gFinL)"/>
<path d="M357 1481 C349 1500 346.500 1518 346 1533 H357.500 C356.500 1546 358 1557 361.500 1566.500 H398 V1481 Z" fill="url(#gFinR)"/></g>
<rect x="329.500" y="1502.500" width="3.400" height="10" rx="1.700" fill="#1a1f2a"/><rect x="370.500" y="1502.500" width="3.400" height="10" rx="1.700" fill="#1a1f2a"/>
<path d="M324.500 1536.500 C339 1551 366 1551 380 1536.500" fill="none" stroke="#12161e" stroke-width="2.700" stroke-linecap="round"/>
<path d="M357 1481 C349 1500 346.500 1518 346 1533 H357.500 C356.500 1546 358 1557 361.500 1566.500" fill="none" stroke="#1b2740" stroke-opacity=".55" stroke-width="1.300"/>
</g>
<g>
<circle cx="472.400" cy="1524" r="49" fill="#f3e9ea"/><circle cx="472.400" cy="1524" r="45" fill="url(#gItu)"/>
<path d="M462 1504.500 L494.500 1497.500 V1537.500 a9.500 7.600 0 1 1 -6.500 -7.200 V1510.500 L468.500 1514.800 V1543.500 a9.500 7.600 0 1 1 -6.500 -7.200 Z" fill="#f6f0f0"/>
</g>
<g>
<circle cx="592.200" cy="1524" r="49" fill="#e8453a"/>
<path d="M592.200 1524 L549.800 1499.500 A49 49 0 0 0 592.200 1573 L613 1536 Z" fill="#4caf50"/>
<path d="M592.200 1524 L613.400 1536.200 L589 1572.900 A49 49 0 0 0 634.600 1499.500 H592.200 Z" fill="#fdd33a"/>
<path d="M549.800 1499.500 A49 49 0 0 1 634.600 1499.500 H592.200 L571 1511.800 Z" fill="#e8453a"/>
<path d="M549.800 1499.500 L571 1536.200 L592.200 1524 Z" fill="#4caf50"/>
<circle cx="592.200" cy="1524" r="22.500" fill="#f4f4f4"/><circle cx="592.200" cy="1524" r="18" fill="#3f87d9"/>
</g>
<g>
<circle cx="714" cy="1524" r="44" fill="#14366c"/>
<circle cx="716" cy="1510" r="39" fill="url(#gFfG)"/>
<path d="M671 1484 C664 1494 660 1506 661 1520 C662 1548 684 1572 712 1574 C742 1576 764 1554 765 1528 C766 1510 760 1494 752 1482 C755 1494 754 1504 750 1512 C754 1526 750 1540 740 1549 C730 1557 712 1558 700 1550 C694 1546 690 1542 688 1537 C700 1541 714 1539 722 1533 C724 1530 722 1527 718 1527 C710 1528 702 1526 699 1520 C697 1517 697 1515 699 1513 L711 1503 C706 1496 702 1492 696 1490 C692 1489 688 1490 684 1492 C680 1490 675 1487 671 1484 Z" fill="url(#gFfF)"/>
<path d="M752 1482 C760 1494 766 1510 765 1528 C764 1542 758 1554 748 1563 C756 1550 758 1536 755 1524 C755 1530 753 1535 750 1539 C752 1528 751 1518 747 1510 C751 1502 753 1492 752 1482 Z" fill="#fcc934"/>
<path d="M688 1537 C700 1541 714 1539 722 1533 C716 1545 700 1548 688 1537 Z" fill="#f9a01e"/>
</g>
<g>
<circle cx="826" cy="1523.300" r="50" fill="#f59a2e"/>
<circle cx="838.800" cy="1523.300" r="49.500" fill="#17122e"/><circle cx="838.800" cy="1523.300" r="47.500" fill="url(#gEcl)"/>
<rect x="790" y="1509.500" width="97" height="6.500" fill="#fff"/><rect x="789.500" y="1521.500" width="98" height="6.500" fill="#fff"/><rect x="791" y="1533.500" width="96" height="6" fill="#fff"/>
</g>
<g>
<circle cx="952.200" cy="1519.400" r="47" fill="#8dc94f"/>
<g clip-path="url(#cAS)"><rect x="900" y="1470" width="105" height="49.500" fill="#7dba45"/></g>
<path d="M944 1527 L918 1574 L914 1576 L915 1569 L937 1519 Z M960.500 1527 L986.500 1574 L990.500 1576 L989.500 1569 L967.500 1519 Z" fill="#f4f4f4"/>
<path d="M927 1553 C943 1562 962 1562 978 1553 L974 1546 C960 1553 945 1553 931 1546 Z" fill="#f4f4f4"/>
<path d="M947.500 1493 H957 V1500 H964 V1509 L957.500 1529 H947 L940.500 1509 V1500 H947.500 Z" fill="#707070"/><circle cx="952.200" cy="1511" r="4.500" fill="#8dc94f"/>
</g>
<g transform="translate(1071.700,1519)"><rect x="-8" y="-53" width="16" height="9" rx="2" fill="#e4e4e4" stroke="#bdbdbd" stroke-width="0.800" transform="rotate(8)"/><rect x="-8" y="-53" width="16" height="9" rx="2" fill="#e4e4e4" stroke="#bdbdbd" stroke-width="0.800" transform="rotate(48)"/><rect x="-8" y="-53" width="16" height="9" rx="2" fill="#e4e4e4" stroke="#bdbdbd" stroke-width="0.800" transform="rotate(88)"/><rect x="-8" y="-53" width="16" height="9" rx="2" fill="#e4e4e4" stroke="#bdbdbd" stroke-width="0.800" transform="rotate(128)"/><rect x="-8" y="-53" width="16" height="9" rx="2" fill="#e4e4e4" stroke="#bdbdbd" stroke-width="0.800" transform="rotate(168)"/><rect x="-8" y="-53" width="16" height="9" rx="2" fill="#e4e4e4" stroke="#bdbdbd" stroke-width="0.800" transform="rotate(208)"/><rect x="-8" y="-53" width="16" height="9" rx="2" fill="#e4e4e4" stroke="#bdbdbd" stroke-width="0.800" transform="rotate(248)"/><rect x="-8" y="-53" width="16" height="9" rx="2" fill="#e4e4e4" stroke="#bdbdbd" stroke-width="0.800" transform="rotate(288)"/><rect x="-8" y="-53" width="16" height="9" rx="2" fill="#e4e4e4" stroke="#bdbdbd" stroke-width="0.800" transform="rotate(328)"/><circle r="43.500" fill="#39435c"/><circle r="41" fill="#56648a"/><circle r="38" fill="#3d4763"/><circle r="36" fill="url(#gSpk)"/></g>
<g stroke-linejoin="round">
<path d="M1191.800 1470.500 L1243 1494 V1551 L1191.800 1578 L1140.500 1551 V1494 Z" fill="#1d2a5c" stroke="#1d2a5c" stroke-width="4"/>
<path d="M1191.800 1474.500 L1239.500 1496.500 L1194 1517 L1144 1496.500 Z" fill="#c6e2e6"/>
<path d="M1144 1496.500 L1194 1517 V1574 L1144 1549 Z" fill="url(#gCubL)"/>
<path d="M1239.500 1496.500 L1194 1517 V1574 L1239.500 1549 Z" fill="url(#gCubR)"/>
</g>
<g>
<circle cx="1314" cy="1523.300" r="55.400" fill="#e8295f"/>
<circle cx="1285.500" cy="1528.600" r="12.600" fill="none" stroke="#fff" stroke-width="4.600"/>
<circle cx="1334.400" cy="1522.500" r="19" fill="none" stroke="#fff" stroke-width="4.800"/>
</g>
<g>
<circle cx="1434.200" cy="1523.300" r="52" fill="#16979d"/><circle cx="1434.200" cy="1523.300" r="48.500" fill="#22a9ad"/>
<path d="M1434.200 1523.500 C1427 1512 1420 1507.500 1413 1507.500 C1404 1507.500 1397.500 1514.500 1397.500 1523.500 C1397.500 1532.500 1404 1539.500 1413 1539.500 C1420 1539.500 1427 1535 1434.200 1523.500 C1441.500 1512 1448.500 1507.500 1455.500 1507.500 C1464.500 1507.500 1471 1514.500 1471 1523.500 C1471 1532.500 1464.500 1539.500 1455.500 1539.500 C1448.500 1539.500 1441.500 1535 1434.200 1523.500 Z" fill="none" stroke="#fff" stroke-width="7.500"/>
<rect x="1407.500" y="1521.700" width="10.500" height="3.600" fill="#fff"/><rect x="1449.500" y="1521.700" width="11.500" height="3.600" fill="#fff"/><rect x="1453.400" y="1517.700" width="3.600" height="11.500" fill="#fff"/>
</g>
<g>
<rect x="1501" y="1469" width="105.500" height="107" rx="4" fill="#1f0830"/>
<rect x="1503.500" y="1471.500" width="100.500" height="102" rx="3" fill="url(#gPT)"/>
<circle cx="1553.700" cy="1522.500" r="42.500" fill="none" stroke="#e9e9ee" stroke-width="5.500"/>
<path d="M1509 1537 L1524 1531 C1538 1519 1544 1497 1554 1497 C1564 1497 1570 1519 1584 1531 L1599 1537 L1597 1546 L1578 1541 C1566 1533 1561 1512 1554 1512 C1547 1512 1542 1533 1530 1541 L1511 1546 Z" fill="#dcdcdf"/>
<path d="M1530 1541 C1542 1533 1547 1512 1554 1512 C1561 1512 1566 1533 1578 1541 C1570 1556 1538 1556 1530 1541 Z" fill="#6a1fa0"/>
</g>
<g>
<circle cx="1674.400" cy="1523.300" r="49.200" fill="#efedf7"/>
<g clip-path="url(#cGH)">
<path d="M1647 1493 L1653 1497 C1665 1492 1684 1492 1696 1497 L1702 1493 C1704 1493 1705 1496 1705 1505 C1710 1512 1711 1521 1709 1529 C1706 1541 1696 1547 1689 1549 L1690 1580 H1661 L1661 1562 C1655 1564 1650 1563 1646 1558 C1643 1554 1640 1550 1636 1549 C1640 1545 1645 1548 1648 1552 C1651 1556 1655 1557 1660 1555 L1661 1549 C1653 1547 1643 1541 1640 1529 C1638 1521 1639 1512 1644 1505 C1644 1496 1645 1493 1647 1493 Z" fill="url(#gGH)"/>
</g></g>
<g>
<g transform="rotate(-8 1791 1528)"><rect x="1744" y="1490" width="95" height="76" fill="url(#gXc)"/><rect x="1748.500" y="1494.500" width="86" height="67" fill="none" stroke="#bfe3fb" stroke-width="1"/>
<g fill="none" stroke="#d6eefc" stroke-width="1.500"><path d="M1787 1500 L1762 1552 M1795 1500 L1770 1552 M1787 1500 L1795 1500 L1822 1552 M1758 1532 H1826 V1539 H1758 Z"/></g></g>
<path d="M1829.500 1520 L1840 1524 L1812 1568 C1809 1572 1799 1569 1801 1563 Z" fill="#24272c"/>
<path d="M1831 1519 L1841 1523 L1846 1493 L1838 1490 Z" fill="url(#gHam)"/>
<path d="M1803 1478 C1815 1472 1834 1472 1846 1481 L1856 1480 L1858 1494 L1846 1496 C1840 1488 1822 1484 1810 1486 Z" fill="url(#gHam)" stroke="#8a8a8a" stroke-width="0.800"/>
</g>
<g>
<path d="M1878 1473.500 L1887 1489 M1950.500 1473.500 L1941.500 1489" stroke="#8bc34a" stroke-width="4.400" stroke-linecap="round"/>
<path d="M1865 1529.500 C1865 1498 1888 1482 1914.300 1482 C1940.500 1482 1963.500 1498 1963.500 1529.500 Z" fill="#86c045"/>
<path d="M1865 1530.500 H1963.500 V1568 a5 5 0 0 1 -5 5 H1870 a5 5 0 0 1 -5 -5 Z" fill="#8fc94d"/>
<circle cx="1893.400" cy="1510" r="6" fill="#f3f3f3"/><circle cx="1935.800" cy="1510" r="6" fill="#f3f3f3"/>
</g>
<g>
<path d="M2046.500 1489 a3 3 0 0 1 3 -3 H2071 L2075.500 1491.500 H2128 a3 3 0 0 1 3 3 V1549 a3 3 0 0 1 -3 3 H2049.500 a3 3 0 0 1 -3 -3 Z" fill="#6fc6f6"/>
<path d="M2046.500 1497 H2131 V1549 a3 3 0 0 1 -3 3 H2049.500 a3 3 0 0 1 -3 -3 Z" fill="#5bb7ee"/>
<rect x="2107" y="1500" width="11" height="16" fill="#f4f4f4"/>
<path d="M2055 1526 L2087.500 1501 L2121 1526 V1570 H2055 Z" fill="#f1f1f1"/>
<path d="M2047.500 1527 L2087.500 1493.500 L2128.500 1527 L2124 1533 L2087.500 1503.500 L2052 1533 Z" fill="#a9783f"/>
<rect x="2080.800" y="1518" width="14.600" height="13.600" fill="#cfe4f4" stroke="#8a6a45" stroke-width="1.800"/>
<rect x="2079.500" y="1542.700" width="17.200" height="27.300" fill="#ef8a1d" stroke="#b86510" stroke-width="1"/>
</g>
<g>
<path d="M2172 1485 L2176 1474 L2186 1477 L2194 1470 L2204 1477 L2212 1469.500 L2222 1476 L2232 1472 L2238 1479 L2246 1477 L2247 1492 H2171 Z" fill="#e6e6e6" stroke="#8a8a8a" stroke-width="0.900"/><path d="M2186 1477 L2190 1488 L2204 1477 M2212 1469.500 L2214 1486 L2222 1476 M2232 1472 L2230 1487" fill="none" stroke="#9c9c9c" stroke-width="1"/>
<path d="M2188 1480 L2196 1474 L2203 1484 Z" fill="#3a77c9"/><path d="M2214 1482 L2224 1476 L2228 1488 Z" fill="#7a4a2a"/><path d="M2200 1476 l6 6 l-9 5 z" fill="#58b04e"/>
<path d="M2168 1488 C2168 1481 2249 1481 2249 1488 L2237 1568 C2236 1577 2181 1577 2180 1568 Z" fill="url(#gTr)" fill-opacity="0.900"/>
<ellipse cx="2208.500" cy="1488" rx="40.500" ry="6.500" fill="#d6d6d6" fill-opacity=".7" stroke="#f6f6f6" stroke-width="1.600"/>
</g>
<rect x="2000" y="1473" width="2" height="110" fill="#363d49"/>
<circle cx="352" cy="1592" r="3.6" fill="#0a0a0a"/>
<circle cx="592" cy="1592" r="3.6" fill="#0a0a0a"/>
<circle cx="952" cy="1592" r="3.6" fill="#0f1a30"/>
<circle cx="1914" cy="1592" r="3.6" fill="#0a0a0a"/>
</svg>
</body>
</html>
